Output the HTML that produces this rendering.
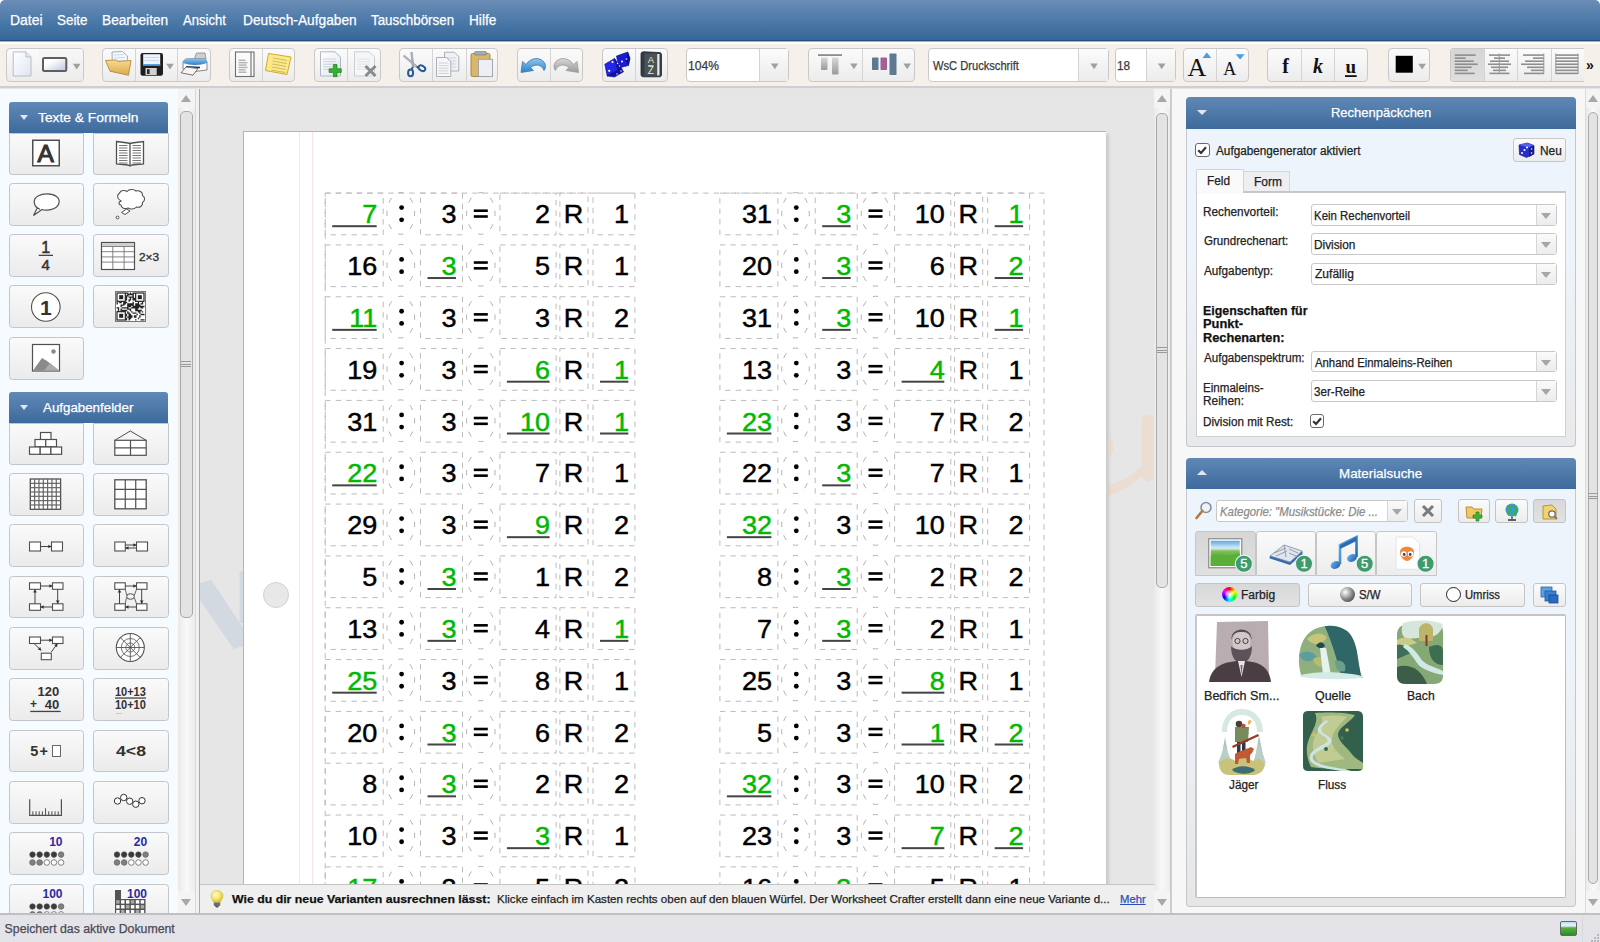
<!DOCTYPE html>
<html><head><meta charset="utf-8">
<style>
*{box-sizing:border-box;margin:0;padding:0}
html,body{width:1600px;height:942px;overflow:hidden;background:#e4e3e8;font-family:"Liberation Sans",sans-serif;font-size:12px;color:#222}
.a{position:absolute}
span.a{-webkit-text-stroke:.25px currentColor}
#menubar{left:0;top:0;width:1600px;height:41px;background:linear-gradient(#6b8db6,#4a78a8 55%,#366798);border-bottom:1px solid #234e7a;border-radius:5px 5px 0 0;box-shadow:inset 0 0 0 0 #000}
#menubar span{position:absolute;top:12px;color:#fff;font-size:13.5px;white-space:nowrap}
#toolbar{left:0;top:41px;width:1600px;height:47px;background:linear-gradient(#a9b0b4 0,#a9b0b4 1px,#fdfdfa 1px,#fdfdfa 2.5px,#f5f0ea 3px);border-bottom:2px solid #cfcfcf}
.grp{position:absolute;top:47px;height:35px;border:1px solid #c9c9c9;border-radius:4px;background:linear-gradient(#fbfbfb,#ececec)}
.grp i{position:absolute;top:0;bottom:0;width:1px;background:#d4d4d4}
.combo{position:absolute;top:47px;height:35px;border:1px solid #c9c9c9;border-radius:4px;background:#fff}
.combo .dd{position:absolute;top:0;right:0;bottom:0;border-left:1px solid #d4d4d4;background:linear-gradient(#fbfbfb,#ececec)}
.tri{position:absolute;width:0;height:0;border-left:5px solid transparent;border-right:5px solid transparent;border-top:7px solid #9a9a9a}
#leftpanel{left:0;top:89px;width:178px;height:825px;background:#f5fbfe}
.lhdr{position:absolute;left:9px;width:159px;height:31px;border-radius:3px 3px 0 0;background:linear-gradient(#6089b6,#3d6a9c);color:#fff;font-size:13px}
.lhdr span{position:absolute;left:33px;top:8px;white-space:nowrap}
.lhdr b{position:absolute;left:11px;top:13px;width:0;height:0;border-left:5px solid transparent;border-right:5px solid transparent;border-top:5px solid #dfe7f0}
.lbtn{position:absolute;width:75px;height:41px;border:1.3px solid #c2c5c9;border-radius:3px;background:linear-gradient(#fafafa,#ebebeb)}
.sb{position:absolute;background:#f3f3f3}
#doc{left:199px;top:89px;width:956px;height:795px;background:#e6e6e6;border-left:1px solid #a9a9a9;overflow:hidden}
#page{position:absolute;left:43px;top:42px;width:863px;height:900px;background:#fff;border-left:1px solid #b5b5b5;border-top:1px solid #b5b5b5;box-shadow:3px 3px 3px rgba(0,0,0,.12)}
#infobar{left:199px;top:884px;width:955px;height:30px;background:#efefef;border-top:1px solid #c4c4c4;border-left:1px solid #a9a9a9}
#rightpanel{left:1171px;top:89px;width:429px;height:825px;background:#f7f7f7;border-left:1px solid #cfcfcf}
.rhdr{position:absolute;left:14px;width:391px;height:31px;border-radius:4px 4px 0 0;background:linear-gradient(#5f88b5,#3d6a9c);color:#fff;font-size:13px;text-align:center}
#status{left:0;top:913px;width:1600px;height:29px;background:#e4e3e8;border-top:2px solid #c0c0c2}
</style></head><body>
<div class="a" style="left:0;top:0;width:8px;height:8px;background:#fff"></div><div class="a" style="left:1592px;top:0;width:8px;height:8px;background:#fff"></div><div id="menubar" class="a"></div>
<span class="a" style="left:10.00px;top:12.30px;font-size:14px;color:#fff;white-space:nowrap;transform:scaleX(0.9968);transform-origin:0 0;">Datei</span><span class="a" style="left:56.74px;top:12.30px;font-size:14px;color:#fff;white-space:nowrap;transform:scaleX(0.9567);transform-origin:0 0;">Seite</span><span class="a" style="left:102.22px;top:12.30px;font-size:14px;color:#fff;white-space:nowrap;transform:scaleX(0.9773);transform-origin:0 0;">Bearbeiten</span><span class="a" style="left:183.30px;top:12.30px;font-size:14px;color:#fff;white-space:nowrap;transform:scaleX(0.9326);transform-origin:0 0;">Ansicht</span><span class="a" style="left:242.62px;top:12.30px;font-size:14px;color:#fff;white-space:nowrap;transform:scaleX(0.9807);transform-origin:0 0;">Deutsch-Aufgaben</span><span class="a" style="left:371.30px;top:12.30px;font-size:14px;color:#fff;white-space:nowrap;transform:scaleX(0.9529);transform-origin:0 0;">Tauschbörsen</span><span class="a" style="left:469.43px;top:12.30px;font-size:14px;color:#fff;white-space:nowrap;transform:scaleX(0.9741);transform-origin:0 0;">Hilfe</span>
<div id="toolbar" class="a"></div>
<div class="grp" style="left:5.5px;top:47.8px;width:78.7px;height:34.10000000000001px"></div><div class="a" style="left:38.8px;top:48.8px;width:44.4px;height:32.1px;background:linear-gradient(#f7f7f7,#ececec);border-radius:0 3px 3px 0"></div><div class="grp" style="left:101.8px;top:47.8px;width:108.89999999999999px;height:34.10000000000001px"><i style="left:32.7px"></i><i style="left:74.60000000000001px"></i></div><div class="grp" style="left:228.5px;top:47.8px;width:66.89999999999998px;height:34.10000000000001px"><i style="left:32.89999999999998px"></i></div><div class="grp" style="left:313.5px;top:47.8px;width:67.19999999999999px;height:34.10000000000001px"><i style="left:32.30000000000001px"></i></div><div class="grp" style="left:398.5px;top:47.8px;width:99.69999999999999px;height:34.10000000000001px"><i style="left:32.0px"></i><i style="left:66.0px"></i></div><div class="grp" style="left:516.5px;top:47.8px;width:66.70000000000005px;height:34.10000000000001px"><i style="left:32.200000000000045px"></i></div><div class="grp" style="left:601.6px;top:47.8px;width:66.60000000000002px;height:34.10000000000001px"><i style="left:32.0px"></i></div><div class="combo" style="left:685.7px;top:47.8px;width:103.5px;height:34.10000000000001px"><div class="dd" style="width:28.800000000000068px"></div></div><span class="a" style="left:687.99px;top:59.20px;font-size:12px;color:#3a3a3a;white-space:nowrap;transform:scaleX(1.0069);transform-origin:0 0;">104%</span><div class="grp" style="left:807.6px;top:47.8px;width:107.19999999999993px;height:34.10000000000001px"><i style="left:53.10000000000002px"></i></div><div class="combo" style="left:928px;top:47.8px;width:181px;height:34.10000000000001px"><div class="dd" style="width:30px"></div></div><span class="a" style="left:932.50px;top:59.20px;font-size:12px;color:#3a3a3a;white-space:nowrap;transform:scaleX(0.9274);transform-origin:0 0;">WsC Druckschrift</span><div class="combo" style="left:1114.6px;top:47.8px;width:61.40000000000009px;height:34.10000000000001px"><div class="dd" style="width:28.59999999999991px"></div></div><span class="a" style="left:1117.22px;top:59.20px;font-size:12px;color:#3a3a3a;white-space:nowrap;transform:scaleX(0.9833);transform-origin:0 0;">18</span><div class="grp" style="left:1182.9px;top:47.8px;width:66.59999999999991px;height:34.10000000000001px"><i style="left:32.59999999999991px"></i></div><div class="grp" style="left:1267.4px;top:47.8px;width:100.59999999999991px;height:34.10000000000001px"><i style="left:33.09999999999991px"></i><i style="left:66.09999999999991px"></i></div><div class="grp" style="left:1387.7px;top:47.8px;width:42.0px;height:34.10000000000001px"></div><div class="grp" style="left:1449.5px;top:47.8px;width:134.0px;height:34.10000000000001px;border-right:none;border-radius:4px 0 0 4px"><div class="a" style="left:0;top:0;width:33.200000000000045px;height:100%;background:linear-gradient(#d6d6d6,#dedede);border-radius:3px 0 0 3px"></div><i style="left:33.200000000000045px"></i><i style="left:66.20000000000005px"></i><i style="left:100.0px"></i></div><svg class="a" style="left:0;top:0" width="1600" height="89"><defs><linearGradient id="pg" x1="0" y1="0" x2="1" y2="1"><stop offset="0" stop-color="#fff"/><stop offset="1" stop-color="#dfe6f2"/></linearGradient><linearGradient id="rg" x1="0" y1="0" x2="1" y2="1"><stop offset=".3" stop-color="#fff"/><stop offset="1" stop-color="#b9c6dc"/></linearGradient><linearGradient id="fg" x1="0" y1="0" x2="0" y2="1"><stop offset="0" stop-color="#f7dc8f"/><stop offset="1" stop-color="#d9a94a"/></linearGradient><linearGradient id="bl" x1="0" y1="0" x2="0" y2="1"><stop offset="0" stop-color="#8cc7f0"/><stop offset="1" stop-color="#2f7fc4"/></linearGradient><linearGradient id="gy" x1="0" y1="0" x2="0" y2="1"><stop offset="0" stop-color="#d8d8d8"/><stop offset="1" stop-color="#9a9a9a"/></linearGradient><linearGradient id="dc" x1="0" y1="0" x2="1" y2="1"><stop offset="0" stop-color="#3a4ee8"/><stop offset="1" stop-color="#10169a"/></linearGradient></defs><path d="M13.2 51.9 H26 L31 56.9 V76 H13.2 Z" fill="url(#pg)" stroke="#b8bcc4" stroke-width="1"/><path d="M26 51.9 V56.9 H31" fill="#e8ecf2" stroke="#b8bcc4" stroke-width="1"/><rect x="43" y="58" width="23.3" height="13" rx="1.5" fill="url(#rg)" stroke="#5e5e5e" stroke-width="2"/><path d="M72.9 63.699999999999996 h7.6 l-3.8 5.8 z" fill="#a0a0a0"/><path d="M112 52 L122.5 51.5 L127.5 56 L127 71 L112.5 71 Z" fill="#f4f7fb" stroke="#9aa6b4" stroke-width=".9"/><path d="M114 55 L124 54.5 M114 58 L125 57.5 M114 61 L125 60.5" stroke="#c0ccd8" stroke-width=".7"/><path d="M105.5 60.5 L116 60 L118 61.5 L131 60.5 L128.5 75.3 L110 71.2 Z" fill="url(#fg)" stroke="#b48a36" stroke-width=".9"/><rect x="140.5" y="53" width="22.5" height="22.7" rx="2.2" fill="#1e1e1e"/><rect x="143.2" y="54.2" width="17" height="11.6" fill="#eef5fc"/><rect x="143.2" y="64.2" width="17" height="1.8" fill="#3a8ad8"/><line x1="144.5" y1="57.5" x2="159" y2="57.5" stroke="#b8d0e8" stroke-width=".7"/><line x1="144.5" y1="60.5" x2="159" y2="60.5" stroke="#b8d0e8" stroke-width=".7"/><rect x="145.5" y="68" width="11.2" height="7" fill="#d0d0d0"/><rect x="147" y="69.2" width="2.6" height="4.8" fill="#2a2a2a"/><path d="M166.2 63.699999999999996 h7.6 l-3.8 5.8 z" fill="#a0a0a0"/><path d="M194.5 58.5 L196.5 53 L205 53 L206 59 Z" fill="#cfcfcf" stroke="#8a8a8a" stroke-width=".8"/><path d="M183 63 C183 60 186 58.5 190 58.5 L203 58.5 C206 58.5 207 61 207 63 L207 70 L195 71.5 L183 69 Z" fill="#fafafa" stroke="#7a7a7a" stroke-width=".9"/><path d="M183 63 C183 60 186 58.5 190 58.5 L203 58.5 C206 58.5 207 61 207 63 C200 65.5 190 65.5 183 63 Z" fill="url(#bl)"/><path d="M186 66 L200 66.8 L200 68.2 L186 67.4 Z" fill="#333"/><path d="M181 72.8 L186 67 L198 68.5 L193 75.2 Z" fill="#f6f6f6" stroke="#666" stroke-width=".9"/><rect x="235.5" y="52" width="18.5" height="24.5" fill="#fafafa" stroke="#6e6e6e" stroke-width="1.1"/><line x1="251" y1="52" x2="251" y2="76.5" stroke="#6e6e6e" stroke-width="1.1"/><rect x="238.5" y="59.5" width="7" height="1.5" fill="#b5b5b5"/><rect x="238.5" y="61.9" width="9" height="1.5" fill="#b5b5b5"/><rect x="238.5" y="64.3" width="8" height="1.5" fill="#b5b5b5"/><rect x="238.5" y="66.7" width="9" height="1.5" fill="#b5b5b5"/><rect x="238.5" y="69.1" width="7" height="1.5" fill="#b5b5b5"/><rect x="238.5" y="71.5" width="8" height="1.5" fill="#b5b5b5"/><path d="M268.5 53.5 L291 57 L287 74.5 L265.5 70.5 Z" fill="#fbe98a" stroke="#d4aa2a" stroke-width="1"/><line x1="273.0" y1="58.0" x2="287.0" y2="60.5" stroke="#b09a40" stroke-width=".6"/><line x1="272.6" y1="61.0" x2="286.6" y2="63.5" stroke="#b09a40" stroke-width=".6"/><line x1="272.2" y1="64.0" x2="286.2" y2="66.5" stroke="#b09a40" stroke-width=".6"/><line x1="271.8" y1="67.0" x2="285.8" y2="69.5" stroke="#b09a40" stroke-width=".6"/><line x1="271.4" y1="70.0" x2="285.4" y2="72.5" stroke="#b09a40" stroke-width=".6"/><path d="M320.5 51.8 H335 L340.5 57 V76 H320.5 Z" fill="url(#pg)" stroke="#aab0ba" stroke-width=".9"/><line x1="323" y1="59.0" x2="336" y2="59.0" stroke="#c5cad2" stroke-width=".8"/><line x1="323" y1="61.6" x2="336" y2="61.6" stroke="#c5cad2" stroke-width=".8"/><line x1="323" y1="64.2" x2="336" y2="64.2" stroke="#c5cad2" stroke-width=".8"/><line x1="323" y1="66.8" x2="336" y2="66.8" stroke="#c5cad2" stroke-width=".8"/><line x1="323" y1="69.4" x2="336" y2="69.4" stroke="#c5cad2" stroke-width=".8"/><path d="M333.4 64.5 h3.6 v4.3 h4.3 v3.6 h-4.3 v4.3 h-3.6 v-4.3 h-4.3 v-3.6 h4.3 z" fill="#33b233" stroke="#1e7a1e" stroke-width=".7"/><path d="M354.5 51.8 H369 L374.5 57 V76 H354.5 Z" fill="#f5f6f8" stroke="#c6cad0" stroke-width=".9"/><line x1="357" y1="59.0" x2="370" y2="59.0" stroke="#dcdfe4" stroke-width=".8"/><line x1="357" y1="61.6" x2="370" y2="61.6" stroke="#dcdfe4" stroke-width=".8"/><line x1="357" y1="64.2" x2="370" y2="64.2" stroke="#dcdfe4" stroke-width=".8"/><line x1="357" y1="66.8" x2="370" y2="66.8" stroke="#dcdfe4" stroke-width=".8"/><line x1="357" y1="69.4" x2="370" y2="69.4" stroke="#dcdfe4" stroke-width=".8"/><path d="M365.5 66 L375.5 76 M375.5 66 L365.5 76" stroke="#8a8a8a" stroke-width="3"/><path d="M410.8 52.5 L412.3 52.3 L414 67.5 L412.3 67.5 Z" fill="#b4bac2" stroke="#80868e" stroke-width=".5"/><path d="M403.3 56.2 L404.5 55.3 L417.5 66.3 L416.2 67.6 Z" fill="#b4bac2" stroke="#80868e" stroke-width=".5"/><path d="M412.8 67 L411.5 69.6 M416.5 66.6 L418.6 67.4" stroke="#2e5b9c" stroke-width="1.8"/><ellipse cx="410.6" cy="72.9" rx="2.5" ry="3.3" fill="none" stroke="#2a5898" stroke-width="2"/><ellipse cx="421.9" cy="68.2" rx="3.6" ry="2.4" fill="none" stroke="#2a5898" stroke-width="2" transform="rotate(30 421.9 68.2)"/><path d="M444.5 52.2 H454.5 L458.8 56.5 V71 H444.5 Z" fill="#eef1f6" stroke="#a4a8ae" stroke-width=".9"/><line x1="447" y1="58.0" x2="456" y2="58.0" stroke="#c8ccd4" stroke-width=".8"/><line x1="447" y1="61.0" x2="456" y2="61.0" stroke="#c8ccd4" stroke-width=".8"/><line x1="447" y1="64.0" x2="456" y2="64.0" stroke="#c8ccd4" stroke-width=".8"/><line x1="447" y1="67.0" x2="456" y2="67.0" stroke="#c8ccd4" stroke-width=".8"/><path d="M436.5 57.5 H446.5 L450.8 61.8 V76.5 H436.5 Z" fill="#f6f7f9" stroke="#a4a8ae" stroke-width=".9"/><line x1="438.5" y1="63.0" x2="448.5" y2="63.0" stroke="#c4c8d0" stroke-width=".8"/><line x1="438.5" y1="65.6" x2="448.5" y2="65.6" stroke="#c4c8d0" stroke-width=".8"/><line x1="438.5" y1="68.2" x2="448.5" y2="68.2" stroke="#c4c8d0" stroke-width=".8"/><line x1="438.5" y1="70.8" x2="448.5" y2="70.8" stroke="#c4c8d0" stroke-width=".8"/><line x1="438.5" y1="73.4" x2="448.5" y2="73.4" stroke="#c4c8d0" stroke-width=".8"/><rect x="471" y="53.5" width="19" height="23" rx="1.5" fill="#d8b768" stroke="#a08238" stroke-width=".9"/><rect x="474.5" y="51.5" width="12" height="3.5" rx="1.2" fill="#a6abb2" stroke="#6e737a" stroke-width=".6"/><rect x="478.5" y="59.3" width="14" height="17.3" fill="#eceff3" stroke="#9aa0a8" stroke-width=".9"/><path d="M521 72.5 L522.5 61.5 L526 64.5 C531 57 541 56.5 545 63.5 C546 66 545.5 69 544 70.5 C542.5 66 537 62.5 530.5 67.5 L533.5 70.5 Z" fill="url(#bl)" stroke="#3a78b8" stroke-width=".8"/><path d="M578.5 72.5 L577 61.5 L573.5 64.5 C568.5 57 558.5 56.5 554.5 63.5 C553.5 66 554 69 555.5 70.5 C557 66 562.5 62.5 569 67.5 L566 70.5 Z" fill="url(#gy)" stroke="#9a9a9a" stroke-width=".8"/><path d="M616.5 56 L627.8 52 L630 58.5 L628.5 65.5 L620.5 67.5 L617.5 61 Z" fill="#1c1cd8" stroke="#0a0a70" stroke-width=".6"/><path d="M627.8 52 L630 58.5 L628.5 65.5 L625.5 60.5 Z" fill="#0e0e9a"/><path d="M604.8 64.2 L614.5 58.5 L618 69.8 L607.2 76 Z" fill="#2424ee" stroke="#0a0a70" stroke-width=".6"/><path d="M614.5 58.5 L620.5 66.5 L623.5 71.8 L614.5 77 L607.2 76 L618 69.8 Z" fill="#1010a8" stroke="#0a0a70" stroke-width=".6"/><circle cx="612.5" cy="62" r="1.1" fill="#fff"/><circle cx="609.2" cy="70.8" r="1.1" fill="#fff"/><circle cx="622" cy="61.5" r="1" fill="#fff"/><circle cx="626.5" cy="59" r="0.8" fill="#fff"/><circle cx="617.5" cy="63.5" r="0.7" fill="#fff"/><circle cx="619.5" cy="66" r="0.7" fill="#fff"/><circle cx="621" cy="71" r="0.7" fill="#fff"/><circle cx="617" cy="74" r="0.7" fill="#fff"/><path d="M641 54 C641 52.5 642 51.8 643.5 51.8 L659.5 52.5 C660.8 52.6 661.5 53.5 661.5 55 L661.5 75 C661.5 76.2 660.5 76.8 659.5 76.8 L643.5 76.8 C642 76.8 641 76 641 74.5 Z" fill="#353b42" stroke="#22262b" stroke-width=".8"/><rect x="644.5" y="53.5" width="12.5" height="22" fill="#48525c"/><rect x="657.2" y="54" width="2.3" height="21.5" fill="#e8e8e8"/><text x="650.8" y="63.2" font-size="9.5" text-anchor="middle" fill="#efe6bc" font-family="Liberation Sans">A</text><text x="650.8" y="74.2" font-size="10" text-anchor="middle" fill="#efe6bc" font-family="Liberation Sans">Z</text><rect x="648" y="65" width="5.5" height="1" fill="#c8c4b0"/><path d="M771.0 63.50000000000001 h7.6 l-3.8 5.8 z" fill="#a0a0a0"/><rect x="818" y="54.2" width="24" height="1.8" fill="#8c8c8c"/><rect x="821" y="57.5" width="6.5" height="12.5" rx="1" fill="url(#gy)"/><rect x="832" y="57.5" width="6.5" height="17" rx="1" fill="url(#gy)"/><path d="M850.1 63.50000000000001 h7.6 l-3.8 5.8 z" fill="#a0a0a0"/><rect x="872" y="57.5" width="6.5" height="12.5" rx=".8" fill="#5d7a92"/><rect x="880.5" y="57.5" width="6.5" height="12.5" rx=".8" fill="#a0609a"/><rect x="889.5" y="53.5" width="7" height="21.5" rx=".8" fill="#5d7a92"/><path d="M903.4000000000001 63.50000000000001 h7.6 l-3.8 5.8 z" fill="#a0a0a0"/><path d="M1090.2 63.50000000000001 h7.6 l-3.8 5.8 z" fill="#a0a0a0"/><path d="M1157.9 63.50000000000001 h7.6 l-3.8 5.8 z" fill="#a0a0a0"/><text x="1197" y="75.8" font-family="Liberation Serif" font-size="26" text-anchor="middle" fill="#111">A</text><path d="M1202.4 58 L1206.85 52.6 L1211.3 58 Z" fill="#4a9de0"/><text x="1229.8" y="75.3" font-family="Liberation Serif" font-size="18" text-anchor="middle" fill="#111">A</text><path d="M1235.7 54.2 H1244.6 L1240.15 59.5 Z" fill="#4a9de0"/><text x="1285.6" y="73" font-family="Liberation Serif" font-size="20" font-weight="bold" text-anchor="middle" fill="#111">f</text><text x="1318" y="73" font-family="Liberation Serif" font-size="20" font-weight="bold" font-style="italic" text-anchor="middle" fill="#111">k</text><text x="1350.8" y="72.5" font-family="Liberation Serif" font-size="19" font-weight="bold" text-anchor="middle" fill="#111">u</text><rect x="1345" y="75.2" width="11.7" height="1.8" fill="#111"/><rect x="1395.7" y="55.8" width="17.1" height="16.9" fill="#000"/><path d="M1418.3 63.800000000000004 h7.6 l-3.8 5.8 z" fill="#a0a0a0"/><rect x="1454.7" y="54.30" width="21" height="1.6" fill="#8e8e8e"/><rect x="1454.7" y="57.35" width="11" height="1.6" fill="#8e8e8e"/><rect x="1454.7" y="60.40" width="19" height="1.6" fill="#8e8e8e"/><rect x="1454.7" y="63.45" width="23" height="1.6" fill="#8e8e8e"/><rect x="1454.7" y="66.50" width="17" height="1.6" fill="#8e8e8e"/><rect x="1454.7" y="69.55" width="13" height="1.6" fill="#8e8e8e"/><rect x="1454.7" y="72.60" width="20" height="1.6" fill="#8e8e8e"/><rect x="1489.0" y="54.30" width="21" height="1.6" fill="#8e8e8e"/><rect x="1494.0" y="57.35" width="11" height="1.6" fill="#8e8e8e"/><rect x="1490.0" y="60.40" width="19" height="1.6" fill="#8e8e8e"/><rect x="1488.0" y="63.45" width="23" height="1.6" fill="#8e8e8e"/><rect x="1491.0" y="66.50" width="17" height="1.6" fill="#8e8e8e"/><rect x="1493.0" y="69.55" width="13" height="1.6" fill="#8e8e8e"/><rect x="1489.5" y="72.60" width="20" height="1.6" fill="#8e8e8e"/><rect x="1498.8" y="53.5" width="1" height="20" fill="#9a9a9a"/><rect x="1523.0" y="54.30" width="21" height="1.6" fill="#8e8e8e"/><rect x="1533.0" y="57.35" width="11" height="1.6" fill="#8e8e8e"/><rect x="1525.0" y="60.40" width="19" height="1.6" fill="#8e8e8e"/><rect x="1521.0" y="63.45" width="23" height="1.6" fill="#8e8e8e"/><rect x="1527.0" y="66.50" width="17" height="1.6" fill="#8e8e8e"/><rect x="1531.0" y="69.55" width="13" height="1.6" fill="#8e8e8e"/><rect x="1524.0" y="72.60" width="20" height="1.6" fill="#8e8e8e"/><rect x="1543.3" y="53.5" width="1" height="20" fill="#9a9a9a"/><rect x="1555.5" y="54.30" width="23" height="1.6" fill="#8e8e8e"/><rect x="1555.5" y="57.35" width="23" height="1.6" fill="#8e8e8e"/><rect x="1555.5" y="60.40" width="23" height="1.6" fill="#8e8e8e"/><rect x="1555.5" y="63.45" width="23" height="1.6" fill="#8e8e8e"/><rect x="1555.5" y="66.50" width="23" height="1.6" fill="#8e8e8e"/><rect x="1555.5" y="69.55" width="23" height="1.6" fill="#8e8e8e"/><rect x="1555.5" y="72.60" width="23" height="1.6" fill="#8e8e8e"/><rect x="1555.3" y="53.5" width="1" height="20" fill="#9a9a9a"/><rect x="1577.5" y="53.5" width="1" height="20" fill="#9a9a9a"/><text x="1590" y="70" font-size="14" font-weight="bold" text-anchor="middle" fill="#111">»</text></svg>
<div id="leftpanel" class="a"></div>
<div class="a" style="left:0;top:89px;width:178px;height:825px;overflow:hidden"><div class="a" style="left:0;top:-89px;width:178px;height:914px"><div class="lhdr" style="top:102px"><b style="left:10.5px;top:13px;border-left-width:4.5px;border-right-width:4.5px"></b></div><span class="a" style="left:38.00px;top:110.20px;font-size:13.4px;color:#fff;white-space:nowrap;transform:scaleX(1.0309);transform-origin:0 0;">Texte &amp; Formeln</span><div class="lbtn" style="left:8.5px;top:133px;width:75.5px;height:41.8px;border-radius:0 0 3px 3px"></div><div class="lbtn" style="left:93px;top:133px;width:75.5px;height:41.8px;border-radius:0 0 3px 3px"></div><div class="lbtn" style="left:8.5px;top:183.2px;width:75.5px;height:42.6px;border-radius:3.5px"></div><div class="lbtn" style="left:93px;top:183.2px;width:75.5px;height:42.6px;border-radius:3.5px"></div><div class="lbtn" style="left:8.5px;top:234.2px;width:75.5px;height:42.6px;border-radius:3.5px"></div><div class="lbtn" style="left:93px;top:234.2px;width:75.5px;height:42.6px;border-radius:3.5px"></div><div class="lbtn" style="left:8.5px;top:285.4px;width:75.5px;height:42.6px;border-radius:3.5px"></div><div class="lbtn" style="left:93px;top:285.4px;width:75.5px;height:42.6px;border-radius:3.5px"></div><div class="lbtn" style="left:8.5px;top:337.2px;width:75.5px;height:42.6px;border-radius:3.5px"></div><div class="lhdr" style="top:392px"><b style="left:10.5px;top:13px;border-left-width:4.5px;border-right-width:4.5px"></b></div><span class="a" style="left:43.00px;top:400.20px;font-size:13.4px;color:#fff;white-space:nowrap;transform:scaleX(0.9945);transform-origin:0 0;">Aufgabenfelder</span><div class="lbtn" style="left:8.5px;top:423px;width:75.5px;height:41.8px;border-radius:0 0 3px 3px"></div><div class="lbtn" style="left:93px;top:423px;width:75.5px;height:41.8px;border-radius:0 0 3px 3px"></div><div class="lbtn" style="left:8.5px;top:473.2px;width:75.5px;height:42.6px;border-radius:3.5px"></div><div class="lbtn" style="left:93px;top:473.2px;width:75.5px;height:42.6px;border-radius:3.5px"></div><div class="lbtn" style="left:8.5px;top:524.2px;width:75.5px;height:42.6px;border-radius:3.5px"></div><div class="lbtn" style="left:93px;top:524.2px;width:75.5px;height:42.6px;border-radius:3.5px"></div><div class="lbtn" style="left:8.5px;top:575.8000000000001px;width:75.5px;height:42.6px;border-radius:3.5px"></div><div class="lbtn" style="left:93px;top:575.8000000000001px;width:75.5px;height:42.6px;border-radius:3.5px"></div><div class="lbtn" style="left:8.5px;top:627.2px;width:75.5px;height:42.6px;border-radius:3.5px"></div><div class="lbtn" style="left:93px;top:627.2px;width:75.5px;height:42.6px;border-radius:3.5px"></div><div class="lbtn" style="left:8.5px;top:678.2px;width:75.5px;height:42.6px;border-radius:3.5px"></div><div class="lbtn" style="left:93px;top:678.2px;width:75.5px;height:42.6px;border-radius:3.5px"></div><div class="lbtn" style="left:8.5px;top:729.8000000000001px;width:75.5px;height:42.6px;border-radius:3.5px"></div><div class="lbtn" style="left:93px;top:729.8000000000001px;width:75.5px;height:42.6px;border-radius:3.5px"></div><div class="lbtn" style="left:8.5px;top:781.2px;width:75.5px;height:42.6px;border-radius:3.5px"></div><div class="lbtn" style="left:93px;top:781.2px;width:75.5px;height:42.6px;border-radius:3.5px"></div><div class="lbtn" style="left:8.5px;top:832.2px;width:75.5px;height:42.6px;border-radius:3.5px"></div><div class="lbtn" style="left:93px;top:832.2px;width:75.5px;height:42.6px;border-radius:3.5px"></div><div class="lbtn" style="left:8.5px;top:883.6px;width:75.5px;height:42.6px;border-radius:3.5px"></div><div class="lbtn" style="left:93px;top:883.6px;width:75.5px;height:42.6px;border-radius:3.5px"></div><svg class="a" style="left:0;top:0" width="178" height="914" font-family="Liberation Sans"><rect x="32.75" y="140.25" width="26.5" height="25.5" fill="#fff" stroke="#505050" stroke-width="1.5"/><text x="45.6" y="161.6" font-size="24.5" text-anchor="middle" fill="#333" stroke="#333" stroke-width="1.1">A</text><path d="M116.5 141.5 L128 143 L130 143.5 L132 143 L143.5 141.5 L143.5 164 L132 165 L130 166 L128 165 L116.5 164 Z" fill="#fff" stroke="#505050" stroke-width="1.3"/><line x1="130" y1="143.5" x2="130" y2="166" stroke="#505050" stroke-width="1.3"/><line x1="119" y1="145.5" x2="127.5" y2="145.5" stroke="#777" stroke-width="1"/><line x1="132.5" y1="145.5" x2="141" y2="145.5" stroke="#777" stroke-width="1"/><line x1="119" y1="148.0" x2="127.5" y2="148.0" stroke="#777" stroke-width="1"/><line x1="132.5" y1="148.0" x2="141" y2="148.0" stroke="#777" stroke-width="1"/><line x1="119" y1="150.5" x2="127.5" y2="150.5" stroke="#777" stroke-width="1"/><line x1="132.5" y1="150.5" x2="141" y2="150.5" stroke="#777" stroke-width="1"/><line x1="119" y1="153.0" x2="127.5" y2="153.0" stroke="#777" stroke-width="1"/><line x1="132.5" y1="153.0" x2="141" y2="153.0" stroke="#777" stroke-width="1"/><line x1="119" y1="155.5" x2="127.5" y2="155.5" stroke="#777" stroke-width="1"/><line x1="132.5" y1="155.5" x2="141" y2="155.5" stroke="#777" stroke-width="1"/><line x1="119" y1="158.0" x2="127.5" y2="158.0" stroke="#777" stroke-width="1"/><line x1="132.5" y1="158.0" x2="141" y2="158.0" stroke="#777" stroke-width="1"/><line x1="119" y1="160.5" x2="127.5" y2="160.5" stroke="#777" stroke-width="1"/><line x1="132.5" y1="160.5" x2="141" y2="160.5" stroke="#777" stroke-width="1"/><line x1="119" y1="163.0" x2="127.5" y2="163.0" stroke="#777" stroke-width="1"/><line x1="132.5" y1="163.0" x2="141" y2="163.0" stroke="#777" stroke-width="1"/><path d="M40 209.2 C33 207 32.5 199 38 196 C43 193 52 193 56.5 196.5 C61 200 59.5 206 54 208.5 C50 210.5 44 210.5 42 209.5 L33.5 215.5 L37.5 207.5" fill="#fff" stroke="#505050" stroke-width="1.2"/><path d="M121 201 C117 199 116.5 195 119.5 193 C121 190 125 190 127 191.5 C129 189 134 189 136 191 C139 190 143 192 142.5 195.5 C145.5 197 145 201 142.5 202.5 C143 206 139.5 208 136.5 207 C134.5 209.5 130 209.5 128 208 C125 209.5 121 208 121 205 C118 204.5 118.5 202 121 201 Z" fill="#fff" stroke="#505050" stroke-width="1.1"/><path d="M121.5 212.5 L126.5 209 L130 211 L125 214.5 Z" fill="#fff" stroke="#505050" stroke-width="1"/><circle cx="117.5" cy="217.5" r="1.4" fill="#fff" stroke="#505050" stroke-width="1"/><text x="45.6" y="253" font-size="16" text-anchor="middle" fill="#333" stroke="#333" stroke-width=".5">1</text><rect x="38.7" y="254.7" width="14.3" height="1.3" fill="#444"/><text x="45.6" y="270.3" font-size="15" text-anchor="middle" fill="#333" stroke="#333" stroke-width=".5">4</text><rect x="101.5" y="242.5" width="33" height="27" fill="#fff" stroke="#505050" stroke-width="1.2"/><rect x="102" y="243" width="32" height="3" fill="#cfcfcf"/><line x1="102" y1="246.5" x2="134" y2="246.5" stroke="#777" stroke-width="0.9"/><line x1="102" y1="251.7" x2="134" y2="251.7" stroke="#777" stroke-width="0.9"/><line x1="102" y1="256.9" x2="134" y2="256.9" stroke="#777" stroke-width="0.9"/><line x1="102" y1="262.1" x2="134" y2="262.1" stroke="#777" stroke-width="0.9"/><line x1="112.8" y1="246.5" x2="112.8" y2="269" stroke="#777" stroke-width="0.9"/><line x1="124.1" y1="246.5" x2="124.1" y2="269" stroke="#777" stroke-width="0.9"/><text x="139" y="261.3" font-size="11" fill="#333" stroke="#333" stroke-width=".35" textLength="20" lengthAdjust="spacingAndGlyphs">2×3</text><circle cx="45.8" cy="307" r="14.3" fill="#fff" stroke="#505050" stroke-width="1.1"/><text x="45.8" y="315" font-size="21" font-weight="bold" text-anchor="middle" fill="#333">1</text><rect x="115.5" y="291.5" width="30" height="30" fill="#fff" stroke="#777" stroke-width="1"/><path d="M125.83 292.50h1.33v1.33h-1.33zM127.17 292.50h1.33v1.33h-1.33zM129.83 292.50h1.33v1.33h-1.33zM132.50 292.50h1.33v1.33h-1.33zM133.83 292.50h1.33v1.33h-1.33zM127.17 293.83h1.33v1.33h-1.33zM128.50 293.83h1.33v1.33h-1.33zM129.83 293.83h1.33v1.33h-1.33zM131.17 293.83h1.33v1.33h-1.33zM132.50 293.83h1.33v1.33h-1.33zM125.83 295.17h1.33v1.33h-1.33zM127.17 295.17h1.33v1.33h-1.33zM132.50 295.17h1.33v1.33h-1.33zM125.83 296.50h1.33v1.33h-1.33zM128.50 296.50h1.33v1.33h-1.33zM129.83 296.50h1.33v1.33h-1.33zM131.17 296.50h1.33v1.33h-1.33zM132.50 296.50h1.33v1.33h-1.33zM125.83 297.83h1.33v1.33h-1.33zM129.83 297.83h1.33v1.33h-1.33zM132.50 297.83h1.33v1.33h-1.33zM133.83 297.83h1.33v1.33h-1.33zM125.83 299.17h1.33v1.33h-1.33zM128.50 299.17h1.33v1.33h-1.33zM129.83 299.17h1.33v1.33h-1.33zM132.50 299.17h1.33v1.33h-1.33zM133.83 299.17h1.33v1.33h-1.33zM128.50 300.50h1.33v1.33h-1.33zM116.50 301.83h1.33v1.33h-1.33zM119.17 301.83h1.33v1.33h-1.33zM120.50 301.83h1.33v1.33h-1.33zM123.17 301.83h1.33v1.33h-1.33zM124.50 301.83h1.33v1.33h-1.33zM125.83 301.83h1.33v1.33h-1.33zM132.50 301.83h1.33v1.33h-1.33zM137.83 301.83h1.33v1.33h-1.33zM141.83 301.83h1.33v1.33h-1.33zM116.50 303.17h1.33v1.33h-1.33zM123.17 303.17h1.33v1.33h-1.33zM124.50 303.17h1.33v1.33h-1.33zM127.17 303.17h1.33v1.33h-1.33zM128.50 303.17h1.33v1.33h-1.33zM129.83 303.17h1.33v1.33h-1.33zM131.17 303.17h1.33v1.33h-1.33zM132.50 303.17h1.33v1.33h-1.33zM135.17 303.17h1.33v1.33h-1.33zM136.50 303.17h1.33v1.33h-1.33zM137.83 303.17h1.33v1.33h-1.33zM140.50 303.17h1.33v1.33h-1.33zM141.83 303.17h1.33v1.33h-1.33zM120.50 304.50h1.33v1.33h-1.33zM121.83 304.50h1.33v1.33h-1.33zM123.17 304.50h1.33v1.33h-1.33zM127.17 304.50h1.33v1.33h-1.33zM128.50 304.50h1.33v1.33h-1.33zM129.83 304.50h1.33v1.33h-1.33zM131.17 304.50h1.33v1.33h-1.33zM132.50 304.50h1.33v1.33h-1.33zM135.17 304.50h1.33v1.33h-1.33zM136.50 304.50h1.33v1.33h-1.33zM137.83 304.50h1.33v1.33h-1.33zM139.17 304.50h1.33v1.33h-1.33zM120.50 305.83h1.33v1.33h-1.33zM127.17 305.83h1.33v1.33h-1.33zM128.50 305.83h1.33v1.33h-1.33zM129.83 305.83h1.33v1.33h-1.33zM132.50 305.83h1.33v1.33h-1.33zM133.83 305.83h1.33v1.33h-1.33zM135.17 305.83h1.33v1.33h-1.33zM136.50 305.83h1.33v1.33h-1.33zM137.83 305.83h1.33v1.33h-1.33zM139.17 305.83h1.33v1.33h-1.33zM140.50 305.83h1.33v1.33h-1.33zM141.83 305.83h1.33v1.33h-1.33zM143.17 305.83h1.33v1.33h-1.33zM116.50 307.17h1.33v1.33h-1.33zM117.83 307.17h1.33v1.33h-1.33zM121.83 307.17h1.33v1.33h-1.33zM123.17 307.17h1.33v1.33h-1.33zM124.50 307.17h1.33v1.33h-1.33zM125.83 307.17h1.33v1.33h-1.33zM127.17 307.17h1.33v1.33h-1.33zM131.17 307.17h1.33v1.33h-1.33zM132.50 307.17h1.33v1.33h-1.33zM133.83 307.17h1.33v1.33h-1.33zM135.17 307.17h1.33v1.33h-1.33zM136.50 307.17h1.33v1.33h-1.33zM137.83 307.17h1.33v1.33h-1.33zM140.50 307.17h1.33v1.33h-1.33zM141.83 307.17h1.33v1.33h-1.33zM117.83 308.50h1.33v1.33h-1.33zM120.50 308.50h1.33v1.33h-1.33zM127.17 308.50h1.33v1.33h-1.33zM128.50 308.50h1.33v1.33h-1.33zM129.83 308.50h1.33v1.33h-1.33zM135.17 308.50h1.33v1.33h-1.33zM136.50 308.50h1.33v1.33h-1.33zM117.83 309.83h1.33v1.33h-1.33zM120.50 309.83h1.33v1.33h-1.33zM121.83 309.83h1.33v1.33h-1.33zM123.17 309.83h1.33v1.33h-1.33zM124.50 309.83h1.33v1.33h-1.33zM125.83 309.83h1.33v1.33h-1.33zM129.83 309.83h1.33v1.33h-1.33zM135.17 309.83h1.33v1.33h-1.33zM136.50 309.83h1.33v1.33h-1.33zM137.83 309.83h1.33v1.33h-1.33zM139.17 309.83h1.33v1.33h-1.33zM140.50 309.83h1.33v1.33h-1.33zM127.17 311.17h1.33v1.33h-1.33zM131.17 311.17h1.33v1.33h-1.33zM137.83 311.17h1.33v1.33h-1.33zM139.17 311.17h1.33v1.33h-1.33zM141.83 311.17h1.33v1.33h-1.33zM127.17 312.50h1.33v1.33h-1.33zM128.50 312.50h1.33v1.33h-1.33zM132.50 312.50h1.33v1.33h-1.33zM133.83 312.50h1.33v1.33h-1.33zM135.17 312.50h1.33v1.33h-1.33zM139.17 312.50h1.33v1.33h-1.33zM125.83 313.83h1.33v1.33h-1.33zM128.50 313.83h1.33v1.33h-1.33zM129.83 313.83h1.33v1.33h-1.33zM136.50 313.83h1.33v1.33h-1.33zM140.50 313.83h1.33v1.33h-1.33zM141.83 313.83h1.33v1.33h-1.33zM143.17 313.83h1.33v1.33h-1.33zM125.83 315.17h1.33v1.33h-1.33zM128.50 315.17h1.33v1.33h-1.33zM129.83 315.17h1.33v1.33h-1.33zM131.17 315.17h1.33v1.33h-1.33zM133.83 315.17h1.33v1.33h-1.33zM135.17 315.17h1.33v1.33h-1.33zM139.17 315.17h1.33v1.33h-1.33zM127.17 316.50h1.33v1.33h-1.33zM128.50 316.50h1.33v1.33h-1.33zM129.83 316.50h1.33v1.33h-1.33zM131.17 316.50h1.33v1.33h-1.33zM133.83 316.50h1.33v1.33h-1.33zM135.17 316.50h1.33v1.33h-1.33zM139.17 316.50h1.33v1.33h-1.33zM125.83 317.83h1.33v1.33h-1.33zM128.50 317.83h1.33v1.33h-1.33zM129.83 317.83h1.33v1.33h-1.33zM137.83 317.83h1.33v1.33h-1.33zM125.83 319.17h1.33v1.33h-1.33zM128.50 319.17h1.33v1.33h-1.33zM135.17 319.17h1.33v1.33h-1.33zM140.50 319.17h1.33v1.33h-1.33zM141.83 319.17h1.33v1.33h-1.33zM143.17 319.17h1.33v1.33h-1.33z" fill="#222"/><rect x="117.00" y="293.00" width="8.33" height="8.33" fill="#fff" stroke="#222" stroke-width="1.2"/><rect x="119.17" y="295.17" width="4.00" height="4.00" fill="#222"/><rect x="135.67" y="293.00" width="8.33" height="8.33" fill="#fff" stroke="#222" stroke-width="1.2"/><rect x="137.83" y="295.17" width="4.00" height="4.00" fill="#222"/><rect x="117.00" y="311.67" width="8.33" height="8.33" fill="#fff" stroke="#222" stroke-width="1.2"/><rect x="119.17" y="313.83" width="4.00" height="4.00" fill="#222"/><rect x="32.5" y="344.5" width="27" height="26.5" fill="#fff" stroke="#505050" stroke-width="1.2"/><circle cx="53.5" cy="351.5" r="2.2" fill="#888"/><path d="M33 370.5 L42 358 L47 361 L49.5 363 L59 370.5 Z" fill="#8a8a8a"/><path d="M44 370.5 L50 363 L59 370.5 Z" fill="#aaa"/><rect x="40.5" y="432.5" width="10.5" height="7.3" fill="#fff" stroke="#505050" stroke-width="1.2"/><rect x="35" y="439.5" width="10.75" height="7.3" fill="#fff" stroke="#505050" stroke-width="1.2"/><rect x="45.75" y="439.5" width="10.75" height="7.3" fill="#fff" stroke="#505050" stroke-width="1.2"/><rect x="29.5" y="447" width="10.7" height="7.3" fill="#fff" stroke="#505050" stroke-width="1.2"/><rect x="40.2" y="447" width="10.7" height="7.3" fill="#fff" stroke="#505050" stroke-width="1.2"/><rect x="50.9" y="447" width="10.7" height="7.3" fill="#fff" stroke="#505050" stroke-width="1.2"/><path d="M114.8 440.3 L130.3 431 L146.2 440.3" fill="none" stroke="#505050" stroke-width="1"/><rect x="114.8" y="440.3" width="31.4" height="15" fill="#fff" stroke="#505050" stroke-width="1.2"/><line x1="130.5" y1="440.3" x2="130.5" y2="455.3" stroke="#505050" stroke-width="1.2"/><line x1="114.8" y1="447.8" x2="146.2" y2="447.8" stroke="#505050" stroke-width="1.2"/><rect x="30.3" y="479" width="30.3" height="30.3" fill="#fff" stroke="#505050" stroke-width="1.3"/><line x1="34.63" y1="479" x2="34.63" y2="509.3" stroke="#666" stroke-width="1.2"/><line x1="30.3" y1="483.33" x2="60.6" y2="483.33" stroke="#666" stroke-width="1.2"/><line x1="38.96" y1="479" x2="38.96" y2="509.3" stroke="#666" stroke-width="1.2"/><line x1="30.3" y1="487.66" x2="60.6" y2="487.66" stroke="#666" stroke-width="1.2"/><line x1="43.29" y1="479" x2="43.29" y2="509.3" stroke="#666" stroke-width="1.2"/><line x1="30.3" y1="491.99" x2="60.6" y2="491.99" stroke="#666" stroke-width="1.2"/><line x1="47.61" y1="479" x2="47.61" y2="509.3" stroke="#666" stroke-width="1.2"/><line x1="30.3" y1="496.31" x2="60.6" y2="496.31" stroke="#666" stroke-width="1.2"/><line x1="51.94" y1="479" x2="51.94" y2="509.3" stroke="#666" stroke-width="1.2"/><line x1="30.3" y1="500.64" x2="60.6" y2="500.64" stroke="#666" stroke-width="1.2"/><line x1="56.27" y1="479" x2="56.27" y2="509.3" stroke="#666" stroke-width="1.2"/><line x1="30.3" y1="504.97" x2="60.6" y2="504.97" stroke="#666" stroke-width="1.2"/><rect x="114.8" y="479.8" width="31.4" height="29" fill="#fff" stroke="#505050" stroke-width="1.3"/><line x1="125.27" y1="479.8" x2="125.27" y2="508.8" stroke="#505050" stroke-width="1.2"/><line x1="114.8" y1="489.47" x2="146.2" y2="489.47" stroke="#505050" stroke-width="1.2"/><line x1="135.73" y1="479.8" x2="135.73" y2="508.8" stroke="#505050" stroke-width="1.2"/><line x1="114.8" y1="499.13" x2="146.2" y2="499.13" stroke="#505050" stroke-width="1.2"/><rect x="29.5" y="542" width="11" height="9" fill="#fff" stroke="#505050" stroke-width="1.1"/><rect x="51.5" y="542" width="11" height="9" fill="#fff" stroke="#505050" stroke-width="1.1"/><line x1="40.5" y1="546.5" x2="51.5" y2="546.5" stroke="#444" stroke-width="1"/><path d="M51.50 546.50 L48.30 548.30 L48.30 544.70 Z" fill="#333"/><rect x="114.8" y="542" width="10.5" height="9" fill="#fff" stroke="#505050" stroke-width="1.1"/><rect x="136.5" y="542" width="11" height="9" fill="#fff" stroke="#505050" stroke-width="1.1"/><line x1="125.3" y1="545" x2="136.5" y2="545" stroke="#444" stroke-width="1"/><path d="M136.50 545.00 L133.30 546.80 L133.30 543.20 Z" fill="#333"/><line x1="136.5" y1="548" x2="125.3" y2="548" stroke="#444" stroke-width="1"/><path d="M125.30 548.00 L128.50 546.20 L128.50 549.80 Z" fill="#333"/><rect x="29.5" y="582.8" width="11" height="6.5" fill="#fff" stroke="#505050" stroke-width="1.1"/><rect x="52.5" y="582.8" width="10.5" height="6.5" fill="#fff" stroke="#505050" stroke-width="1.1"/><rect x="29.5" y="603.8" width="11" height="6.5" fill="#fff" stroke="#505050" stroke-width="1.1"/><rect x="52.5" y="603.8" width="10.5" height="6.5" fill="#fff" stroke="#505050" stroke-width="1.1"/><line x1="40.5" y1="586" x2="52.5" y2="586" stroke="#444" stroke-width="1"/><path d="M52.50 586.00 L49.30 587.80 L49.30 584.20 Z" fill="#333"/><line x1="57.7" y1="589.3" x2="57.7" y2="603.8" stroke="#444" stroke-width="1"/><path d="M57.70 603.80 L55.90 600.60 L59.50 600.60 Z" fill="#333"/><line x1="52.5" y1="607" x2="40.5" y2="607" stroke="#444" stroke-width="1"/><path d="M40.50 607.00 L43.70 605.20 L43.70 608.80 Z" fill="#333"/><line x1="35" y1="603.8" x2="35" y2="589.3" stroke="#444" stroke-width="1"/><path d="M35.00 589.30 L36.80 592.50 L33.20 592.50 Z" fill="#333"/><rect x="114.8" y="582.8" width="10.5" height="6.5" fill="#fff" stroke="#505050" stroke-width="1.1"/><rect x="136.5" y="582.8" width="10.5" height="6.5" fill="#fff" stroke="#505050" stroke-width="1.1"/><rect x="114.8" y="603.8" width="10.5" height="6.5" fill="#fff" stroke="#505050" stroke-width="1.1"/><rect x="136.5" y="603.8" width="10.5" height="6.5" fill="#fff" stroke="#505050" stroke-width="1.1"/><line x1="125.3" y1="586" x2="136.5" y2="586" stroke="#444" stroke-width="1"/><path d="M136.50 586.00 L133.30 587.80 L133.30 584.20 Z" fill="#333"/><line x1="141.7" y1="589.3" x2="141.7" y2="603.8" stroke="#444" stroke-width="1"/><path d="M141.70 603.80 L139.90 600.60 L143.50 600.60 Z" fill="#333"/><line x1="136.5" y1="607" x2="125.3" y2="607" stroke="#444" stroke-width="1"/><path d="M125.30 607.00 L128.50 605.20 L128.50 608.80 Z" fill="#333"/><line x1="119.5" y1="603.8" x2="119.5" y2="589.3" stroke="#444" stroke-width="1"/><path d="M119.50 589.30 L121.30 592.50 L117.70 592.50 Z" fill="#333"/><ellipse cx="130.5" cy="596.5" rx="3.8" ry="2.8" fill="none" stroke="#505050" stroke-width="1"/><path d="M125.3 589.3 L126.8 595.5 M136.5 589.3 L134.3 595.5 M126.5 597.5 L125.3 603.8 M134.3 597.5 L136.5 603.8" stroke="#555" stroke-width=".9"/><rect x="29.5" y="637" width="11" height="6.5" fill="#fff" stroke="#505050" stroke-width="1.1"/><rect x="52.5" y="637" width="10.5" height="6.5" fill="#fff" stroke="#505050" stroke-width="1.1"/><rect x="41.3" y="653.2" width="10" height="6.5" fill="#fff" stroke="#505050" stroke-width="1.1"/><line x1="40.5" y1="640.2" x2="52.5" y2="640.2" stroke="#444" stroke-width="1"/><path d="M52.50 640.20 L49.30 642.00 L49.30 638.40 Z" fill="#333"/><line x1="34" y1="643.5" x2="41.3" y2="650.5" stroke="#444" stroke-width="1"/><path d="M41.30 650.50 L37.74 649.58 L40.24 646.99 Z" fill="#333"/><line x1="51.3" y1="652" x2="57.5" y2="643.5" stroke="#444" stroke-width="1"/><path d="M57.50 643.50 L57.07 647.15 L54.16 645.02 Z" fill="#333"/><circle cx="130.3" cy="647.5" r="14" fill="#fff" stroke="#505050" stroke-width="1.1"/><circle cx="130.3" cy="647.5" r="9" fill="none" stroke="#666" stroke-width=".9"/><circle cx="130.3" cy="647.5" r="4.5" fill="none" stroke="#666" stroke-width=".9"/><path d="M116.3 647.5 H144.3 M130.3 633.5 V661.5 M120.4 637.6 L140.2 657.4 M140.2 637.6 L120.4 657.4" stroke="#555" stroke-width=".9"/><text x="59.2" y="695.8" font-size="13" font-weight="bold" text-anchor="end" fill="#333">120</text><text x="59.2" y="708.9" font-size="13" font-weight="bold" text-anchor="end" fill="#333">40</text><text x="30" y="707.5" font-size="12" font-weight="bold" fill="#333">+</text><rect x="30.2" y="710.8" width="30.5" height="1.3" fill="#444"/><text x="130.4" y="695.8" font-size="12.5" font-weight="bold" text-anchor="middle" fill="#333" textLength="31" lengthAdjust="spacingAndGlyphs">10+13</text><rect x="115" y="697.4" width="31" height="1.3" fill="#444"/><text x="130.4" y="708.9" font-size="12.5" font-weight="bold" text-anchor="middle" fill="#333" textLength="31" lengthAdjust="spacingAndGlyphs">10+10</text><text x="116" y="714" font-size="7" fill="#666">...</text><text x="30.2" y="756.3" font-size="14.5" font-weight="bold" fill="#333">5</text><text x="39.5" y="756.3" font-size="14.5" font-weight="bold" fill="#333">+</text><rect x="52.5" y="745.5" width="8" height="11" fill="#fff" stroke="#666" stroke-width="1"/><text x="131" y="756.3" font-size="14.5" font-weight="bold" text-anchor="middle" fill="#333" textLength="30" lengthAdjust="spacingAndGlyphs">4&lt;8</text><path d="M29.7 799.2 V815.3 H61.4 V799.2" fill="none" stroke="#505050" stroke-width="1.2"/><line x1="32.87" y1="815.3" x2="32.87" y2="811.3" stroke="#505050" stroke-width="1"/><line x1="36.04" y1="815.3" x2="36.04" y2="811.3" stroke="#505050" stroke-width="1"/><line x1="39.21" y1="815.3" x2="39.21" y2="811.3" stroke="#505050" stroke-width="1"/><line x1="42.38" y1="815.3" x2="42.38" y2="811.3" stroke="#505050" stroke-width="1"/><line x1="45.55" y1="815.3" x2="45.55" y2="808.3" stroke="#505050" stroke-width="1"/><line x1="48.72" y1="815.3" x2="48.72" y2="811.3" stroke="#505050" stroke-width="1"/><line x1="51.89" y1="815.3" x2="51.89" y2="811.3" stroke="#505050" stroke-width="1"/><line x1="55.06" y1="815.3" x2="55.06" y2="811.3" stroke="#505050" stroke-width="1"/><line x1="58.23" y1="815.3" x2="58.23" y2="811.3" stroke="#505050" stroke-width="1"/><circle cx="117.5" cy="801" r="3.2" fill="#fff" stroke="#333" stroke-width="1"/><circle cx="123.7" cy="797.5" r="3.2" fill="#fff" stroke="#333" stroke-width="1"/><circle cx="129.7" cy="801.2" r="3.2" fill="#fff" stroke="#333" stroke-width="1"/><circle cx="135.8" cy="804.2" r="3.2" fill="#fff" stroke="#333" stroke-width="1"/><circle cx="142" cy="800.7" r="3.2" fill="#fff" stroke="#333" stroke-width="1"/><text x="62.5" y="846.4" font-size="12" font-weight="bold" text-anchor="end" fill="#2a2aa0">10</text><circle cx="32.50" cy="854.6" r="2.8" fill="#3a3a3a" stroke="#555" stroke-width=".6"/><circle cx="32.50" cy="862.50" r="2.8" fill="#808080" stroke="#666" stroke-width=".8"/><circle cx="39.65" cy="854.6" r="2.8" fill="#3a3a3a" stroke="#555" stroke-width=".6"/><circle cx="39.65" cy="862.50" r="2.8" fill="#808080" stroke="#666" stroke-width=".8"/><circle cx="46.80" cy="854.6" r="2.8" fill="#3a3a3a" stroke="#555" stroke-width=".6"/><circle cx="46.80" cy="862.50" r="2.8" fill="#fff" stroke="#666" stroke-width=".8"/><circle cx="53.95" cy="854.6" r="2.8" fill="#3a3a3a" stroke="#555" stroke-width=".6"/><circle cx="53.95" cy="862.50" r="2.8" fill="#fff" stroke="#666" stroke-width=".8"/><circle cx="61.10" cy="854.6" r="2.8" fill="#808080" stroke="#555" stroke-width=".6"/><circle cx="61.10" cy="862.50" r="2.8" fill="#fff" stroke="#666" stroke-width=".8"/><text x="147.1" y="846.4" font-size="12" font-weight="bold" text-anchor="end" fill="#2a2aa0">20</text><circle cx="117.00" cy="854.6" r="2.8" fill="#3a3a3a" stroke="#555" stroke-width=".6"/><circle cx="117.00" cy="862.50" r="2.8" fill="#808080" stroke="#666" stroke-width=".8"/><circle cx="124.15" cy="854.6" r="2.8" fill="#3a3a3a" stroke="#555" stroke-width=".6"/><circle cx="124.15" cy="862.50" r="2.8" fill="#808080" stroke="#666" stroke-width=".8"/><circle cx="131.30" cy="854.6" r="2.8" fill="#3a3a3a" stroke="#555" stroke-width=".6"/><circle cx="131.30" cy="862.50" r="2.8" fill="#fff" stroke="#666" stroke-width=".8"/><circle cx="138.45" cy="854.6" r="2.8" fill="#3a3a3a" stroke="#555" stroke-width=".6"/><circle cx="138.45" cy="862.50" r="2.8" fill="#fff" stroke="#666" stroke-width=".8"/><circle cx="145.60" cy="854.6" r="2.8" fill="#808080" stroke="#555" stroke-width=".6"/><circle cx="145.60" cy="862.50" r="2.8" fill="#fff" stroke="#666" stroke-width=".8"/><text x="62.5" y="898" font-size="12" font-weight="bold" text-anchor="end" fill="#2a2aa0">100</text><circle cx="32.50" cy="906.5" r="2.8" fill="#3a3a3a" stroke="#555" stroke-width=".6"/><circle cx="32.50" cy="914.40" r="2.8" fill="#808080" stroke="#666" stroke-width=".8"/><circle cx="39.65" cy="906.5" r="2.8" fill="#3a3a3a" stroke="#555" stroke-width=".6"/><circle cx="39.65" cy="914.40" r="2.8" fill="#808080" stroke="#666" stroke-width=".8"/><circle cx="46.80" cy="906.5" r="2.8" fill="#3a3a3a" stroke="#555" stroke-width=".6"/><circle cx="46.80" cy="914.40" r="2.8" fill="#fff" stroke="#666" stroke-width=".8"/><circle cx="53.95" cy="906.5" r="2.8" fill="#3a3a3a" stroke="#555" stroke-width=".6"/><circle cx="53.95" cy="914.40" r="2.8" fill="#fff" stroke="#666" stroke-width=".8"/><circle cx="61.10" cy="906.5" r="2.8" fill="#808080" stroke="#555" stroke-width=".6"/><circle cx="61.10" cy="914.40" r="2.8" fill="#fff" stroke="#666" stroke-width=".8"/><rect x="115" y="890" width="6" height="24" fill="#555"/><rect x="115" y="899" width="30.5" height="15" fill="#555"/><rect x="116.2" y="900.2" width="3.4" height="3.4" fill="#aaa"/><rect x="121.1" y="900.2" width="3.4" height="3.4" fill="#fff"/><rect x="126.0" y="900.2" width="3.4" height="3.4" fill="#fff"/><rect x="130.9" y="900.2" width="3.4" height="3.4" fill="#aaa"/><rect x="135.8" y="900.2" width="3.4" height="3.4" fill="#fff"/><rect x="140.7" y="900.2" width="3.4" height="3.4" fill="#fff"/><rect x="116.2" y="905.1" width="3.4" height="3.4" fill="#fff"/><rect x="121.1" y="905.1" width="3.4" height="3.4" fill="#fff"/><rect x="126.0" y="905.1" width="3.4" height="3.4" fill="#aaa"/><rect x="130.9" y="905.1" width="3.4" height="3.4" fill="#fff"/><rect x="135.8" y="905.1" width="3.4" height="3.4" fill="#fff"/><rect x="140.7" y="905.1" width="3.4" height="3.4" fill="#aaa"/><rect x="116.2" y="910.0" width="3.4" height="3.4" fill="#fff"/><rect x="121.1" y="910.0" width="3.4" height="3.4" fill="#aaa"/><rect x="126.0" y="910.0" width="3.4" height="3.4" fill="#fff"/><rect x="130.9" y="910.0" width="3.4" height="3.4" fill="#fff"/><rect x="135.8" y="910.0" width="3.4" height="3.4" fill="#aaa"/><rect x="140.7" y="910.0" width="3.4" height="3.4" fill="#fff"/><text x="147" y="898" font-size="12" font-weight="bold" text-anchor="end" fill="#2a2aa0">100</text></svg></div></div>
<div id="doc" class="a"><svg class="a" style="left:0;top:0" width="954" height="795"><path d="M0 494 L11.3 491 L43.3 539 L43.3 557 L33.6 560 L0 511 Z" fill="#d3d9e1"/><path d="M39.6 483 L43.5 482 L43.5 534 L39.6 534 Z" fill="#d3d9e1"/><rect x="941.7" y="325.4" width="12.5" height="67" rx="6.2" fill="#ebddd2"/><path d="M910 348 C914 352 915 362 910 369 Z" fill="#ebddd2"/><path d="M908 397 C920 392 934 386 940 378 C944 376 946 380 944 384 C936 394 922 402 908 407 Z" fill="#ebddd2"/></svg><div id="page"></div>
<div class="a" style="left:99px;top:43px;width:1px;height:760px;background:#fbe3ea"></div>
<div class="a" style="left:112px;top:43px;width:1px;height:760px;background:#fbe3ea"></div>
<div class="a" style="left:62.5px;top:493px;width:26px;height:26px;border-radius:50%;background:#e8e8e8;border:1px solid #d2d2d2"></div>
<svg id="grid" class="a" style="left:0;top:0" width="954" height="795"><style>#grid .d{fill:none;stroke:#bcbcbc;stroke-width:1;stroke-dasharray:5.5 5}#grid .e{fill:none;stroke:#b0b0b0;stroke-width:1;stroke-dasharray:4 6;stroke-dashoffset:2}#grid text{font-family:"Liberation Sans",sans-serif;font-size:25px;fill:#000;stroke:#000;stroke-width:.45}#grid text.g{fill:#00b900;stroke:#00b900}</style><rect x="125.2" y="104.1" width="718.8" height="900" class="d"/><rect x="125.2" y="104.1" width="58.0" height="41.7" class="d"/><rect x="132.2" y="136.2" width="44.5" height="2" fill="#444"/><text transform="translate(177.2,134.3) scale(1.08,1)" text-anchor="end" class="g">7</text><ellipse cx="200.8" cy="124.45" rx="13.8" ry="20.85" class="e" pathLength="80"/><circle cx="201.6" cy="118.6" r="2.4" fill="#000"/><circle cx="201.6" cy="130.8" r="2.4" fill="#000"/><rect x="220.5" y="104.1" width="42.0" height="41.7" class="d"/><text transform="translate(256.5,134.3) scale(1.08,1)" text-anchor="end">3</text><ellipse cx="280.8" cy="124.45" rx="14.2" ry="20.85" class="e" pathLength="80"/><rect x="273.8" y="120.4" width="14" height="2.6" fill="#000"/><rect x="273.8" y="126.2" width="14" height="2.6" fill="#000"/><rect x="299.9" y="104.1" width="56.2" height="41.7" class="d"/><text transform="translate(350.1,134.3) scale(1.08,1)" text-anchor="end">2</text><rect x="359.9" y="104.1" width="28.1" height="41.7" class="d"/><text transform="translate(373.45,134.3) scale(1.08,1)" text-anchor="middle">R</text><rect x="393.0" y="104.1" width="41.9" height="41.7" class="d"/><text transform="translate(428.9,134.3) scale(1.08,1)" text-anchor="end">1</text><rect x="125.2" y="155.93" width="58.0" height="41.7" class="d"/><text transform="translate(177.2,186.13) scale(1.08,1)" text-anchor="end">16</text><ellipse cx="200.8" cy="176.28" rx="13.8" ry="20.85" class="e" pathLength="80"/><circle cx="201.6" cy="170.43" r="2.4" fill="#000"/><circle cx="201.6" cy="182.63" r="2.4" fill="#000"/><rect x="220.5" y="155.93" width="42.0" height="41.7" class="d"/><rect x="227.5" y="188.03" width="28.5" height="2" fill="#444"/><text transform="translate(256.5,186.13) scale(1.08,1)" text-anchor="end" class="g">3</text><ellipse cx="280.8" cy="176.28" rx="14.2" ry="20.85" class="e" pathLength="80"/><rect x="273.8" y="172.23" width="14" height="2.6" fill="#000"/><rect x="273.8" y="178.03" width="14" height="2.6" fill="#000"/><rect x="299.9" y="155.93" width="56.2" height="41.7" class="d"/><text transform="translate(350.1,186.13) scale(1.08,1)" text-anchor="end">5</text><rect x="359.9" y="155.93" width="28.1" height="41.7" class="d"/><text transform="translate(373.45,186.13) scale(1.08,1)" text-anchor="middle">R</text><rect x="393.0" y="155.93" width="41.9" height="41.7" class="d"/><text transform="translate(428.9,186.13) scale(1.08,1)" text-anchor="end">1</text><rect x="125.2" y="207.76" width="58.0" height="41.7" class="d"/><rect x="132.2" y="239.86" width="44.5" height="2" fill="#444"/><text transform="translate(177.2,237.96) scale(1.08,1)" text-anchor="end" class="g">11</text><ellipse cx="200.8" cy="228.11" rx="13.8" ry="20.85" class="e" pathLength="80"/><circle cx="201.6" cy="222.26" r="2.4" fill="#000"/><circle cx="201.6" cy="234.46" r="2.4" fill="#000"/><rect x="220.5" y="207.76" width="42.0" height="41.7" class="d"/><text transform="translate(256.5,237.96) scale(1.08,1)" text-anchor="end">3</text><ellipse cx="280.8" cy="228.11" rx="14.2" ry="20.85" class="e" pathLength="80"/><rect x="273.8" y="224.06" width="14" height="2.6" fill="#000"/><rect x="273.8" y="229.86" width="14" height="2.6" fill="#000"/><rect x="299.9" y="207.76" width="56.2" height="41.7" class="d"/><text transform="translate(350.1,237.96) scale(1.08,1)" text-anchor="end">3</text><rect x="359.9" y="207.76" width="28.1" height="41.7" class="d"/><text transform="translate(373.45,237.96) scale(1.08,1)" text-anchor="middle">R</text><rect x="393.0" y="207.76" width="41.9" height="41.7" class="d"/><text transform="translate(428.9,237.96) scale(1.08,1)" text-anchor="end">2</text><rect x="125.2" y="259.59" width="58.0" height="41.7" class="d"/><text transform="translate(177.2,289.79) scale(1.08,1)" text-anchor="end">19</text><ellipse cx="200.8" cy="279.94" rx="13.8" ry="20.85" class="e" pathLength="80"/><circle cx="201.6" cy="274.09" r="2.4" fill="#000"/><circle cx="201.6" cy="286.29" r="2.4" fill="#000"/><rect x="220.5" y="259.59" width="42.0" height="41.7" class="d"/><text transform="translate(256.5,289.79) scale(1.08,1)" text-anchor="end">3</text><ellipse cx="280.8" cy="279.94" rx="14.2" ry="20.85" class="e" pathLength="80"/><rect x="273.8" y="275.89" width="14" height="2.6" fill="#000"/><rect x="273.8" y="281.69" width="14" height="2.6" fill="#000"/><rect x="299.9" y="259.59" width="56.2" height="41.7" class="d"/><rect x="306.9" y="291.69" width="42.7" height="2" fill="#444"/><text transform="translate(350.1,289.79) scale(1.08,1)" text-anchor="end" class="g">6</text><rect x="359.9" y="259.59" width="28.1" height="41.7" class="d"/><text transform="translate(373.45,289.79) scale(1.08,1)" text-anchor="middle">R</text><rect x="393.0" y="259.59" width="41.9" height="41.7" class="d"/><rect x="400.0" y="291.69" width="28.4" height="2" fill="#444"/><text transform="translate(428.9,289.79) scale(1.08,1)" text-anchor="end" class="g">1</text><rect x="125.2" y="311.42" width="58.0" height="41.7" class="d"/><text transform="translate(177.2,341.62) scale(1.08,1)" text-anchor="end">31</text><ellipse cx="200.8" cy="331.77" rx="13.8" ry="20.85" class="e" pathLength="80"/><circle cx="201.6" cy="325.92" r="2.4" fill="#000"/><circle cx="201.6" cy="338.12" r="2.4" fill="#000"/><rect x="220.5" y="311.42" width="42.0" height="41.7" class="d"/><text transform="translate(256.5,341.62) scale(1.08,1)" text-anchor="end">3</text><ellipse cx="280.8" cy="331.77" rx="14.2" ry="20.85" class="e" pathLength="80"/><rect x="273.8" y="327.72" width="14" height="2.6" fill="#000"/><rect x="273.8" y="333.52" width="14" height="2.6" fill="#000"/><rect x="299.9" y="311.42" width="56.2" height="41.7" class="d"/><rect x="306.9" y="343.52" width="42.7" height="2" fill="#444"/><text transform="translate(350.1,341.62) scale(1.08,1)" text-anchor="end" class="g">10</text><rect x="359.9" y="311.42" width="28.1" height="41.7" class="d"/><text transform="translate(373.45,341.62) scale(1.08,1)" text-anchor="middle">R</text><rect x="393.0" y="311.42" width="41.9" height="41.7" class="d"/><rect x="400.0" y="343.52" width="28.4" height="2" fill="#444"/><text transform="translate(428.9,341.62) scale(1.08,1)" text-anchor="end" class="g">1</text><rect x="125.2" y="363.25" width="58.0" height="41.7" class="d"/><rect x="132.2" y="395.35" width="44.5" height="2" fill="#444"/><text transform="translate(177.2,393.45) scale(1.08,1)" text-anchor="end" class="g">22</text><ellipse cx="200.8" cy="383.6" rx="13.8" ry="20.85" class="e" pathLength="80"/><circle cx="201.6" cy="377.75" r="2.4" fill="#000"/><circle cx="201.6" cy="389.95" r="2.4" fill="#000"/><rect x="220.5" y="363.25" width="42.0" height="41.7" class="d"/><text transform="translate(256.5,393.45) scale(1.08,1)" text-anchor="end">3</text><ellipse cx="280.8" cy="383.6" rx="14.2" ry="20.85" class="e" pathLength="80"/><rect x="273.8" y="379.55" width="14" height="2.6" fill="#000"/><rect x="273.8" y="385.35" width="14" height="2.6" fill="#000"/><rect x="299.9" y="363.25" width="56.2" height="41.7" class="d"/><text transform="translate(350.1,393.45) scale(1.08,1)" text-anchor="end">7</text><rect x="359.9" y="363.25" width="28.1" height="41.7" class="d"/><text transform="translate(373.45,393.45) scale(1.08,1)" text-anchor="middle">R</text><rect x="393.0" y="363.25" width="41.9" height="41.7" class="d"/><text transform="translate(428.9,393.45) scale(1.08,1)" text-anchor="end">1</text><rect x="125.2" y="415.08" width="58.0" height="41.7" class="d"/><text transform="translate(177.2,445.28) scale(1.08,1)" text-anchor="end">29</text><ellipse cx="200.8" cy="435.43" rx="13.8" ry="20.85" class="e" pathLength="80"/><circle cx="201.6" cy="429.58" r="2.4" fill="#000"/><circle cx="201.6" cy="441.78" r="2.4" fill="#000"/><rect x="220.5" y="415.08" width="42.0" height="41.7" class="d"/><text transform="translate(256.5,445.28) scale(1.08,1)" text-anchor="end">3</text><ellipse cx="280.8" cy="435.43" rx="14.2" ry="20.85" class="e" pathLength="80"/><rect x="273.8" y="431.38" width="14" height="2.6" fill="#000"/><rect x="273.8" y="437.18" width="14" height="2.6" fill="#000"/><rect x="299.9" y="415.08" width="56.2" height="41.7" class="d"/><rect x="306.9" y="447.18" width="42.7" height="2" fill="#444"/><text transform="translate(350.1,445.28) scale(1.08,1)" text-anchor="end" class="g">9</text><rect x="359.9" y="415.08" width="28.1" height="41.7" class="d"/><text transform="translate(373.45,445.28) scale(1.08,1)" text-anchor="middle">R</text><rect x="393.0" y="415.08" width="41.9" height="41.7" class="d"/><text transform="translate(428.9,445.28) scale(1.08,1)" text-anchor="end">2</text><rect x="125.2" y="466.91" width="58.0" height="41.7" class="d"/><text transform="translate(177.2,497.11) scale(1.08,1)" text-anchor="end">5</text><ellipse cx="200.8" cy="487.26" rx="13.8" ry="20.85" class="e" pathLength="80"/><circle cx="201.6" cy="481.41" r="2.4" fill="#000"/><circle cx="201.6" cy="493.61" r="2.4" fill="#000"/><rect x="220.5" y="466.91" width="42.0" height="41.7" class="d"/><rect x="227.5" y="499.01" width="28.5" height="2" fill="#444"/><text transform="translate(256.5,497.11) scale(1.08,1)" text-anchor="end" class="g">3</text><ellipse cx="280.8" cy="487.26" rx="14.2" ry="20.85" class="e" pathLength="80"/><rect x="273.8" y="483.21" width="14" height="2.6" fill="#000"/><rect x="273.8" y="489.01" width="14" height="2.6" fill="#000"/><rect x="299.9" y="466.91" width="56.2" height="41.7" class="d"/><text transform="translate(350.1,497.11) scale(1.08,1)" text-anchor="end">1</text><rect x="359.9" y="466.91" width="28.1" height="41.7" class="d"/><text transform="translate(373.45,497.11) scale(1.08,1)" text-anchor="middle">R</text><rect x="393.0" y="466.91" width="41.9" height="41.7" class="d"/><text transform="translate(428.9,497.11) scale(1.08,1)" text-anchor="end">2</text><rect x="125.2" y="518.74" width="58.0" height="41.7" class="d"/><text transform="translate(177.2,548.94) scale(1.08,1)" text-anchor="end">13</text><ellipse cx="200.8" cy="539.09" rx="13.8" ry="20.85" class="e" pathLength="80"/><circle cx="201.6" cy="533.24" r="2.4" fill="#000"/><circle cx="201.6" cy="545.44" r="2.4" fill="#000"/><rect x="220.5" y="518.74" width="42.0" height="41.7" class="d"/><rect x="227.5" y="550.84" width="28.5" height="2" fill="#444"/><text transform="translate(256.5,548.94) scale(1.08,1)" text-anchor="end" class="g">3</text><ellipse cx="280.8" cy="539.09" rx="14.2" ry="20.85" class="e" pathLength="80"/><rect x="273.8" y="535.04" width="14" height="2.6" fill="#000"/><rect x="273.8" y="540.84" width="14" height="2.6" fill="#000"/><rect x="299.9" y="518.74" width="56.2" height="41.7" class="d"/><text transform="translate(350.1,548.94) scale(1.08,1)" text-anchor="end">4</text><rect x="359.9" y="518.74" width="28.1" height="41.7" class="d"/><text transform="translate(373.45,548.94) scale(1.08,1)" text-anchor="middle">R</text><rect x="393.0" y="518.74" width="41.9" height="41.7" class="d"/><rect x="400.0" y="550.84" width="28.4" height="2" fill="#444"/><text transform="translate(428.9,548.94) scale(1.08,1)" text-anchor="end" class="g">1</text><rect x="125.2" y="570.57" width="58.0" height="41.7" class="d"/><rect x="132.2" y="602.67" width="44.5" height="2" fill="#444"/><text transform="translate(177.2,600.77) scale(1.08,1)" text-anchor="end" class="g">25</text><ellipse cx="200.8" cy="590.92" rx="13.8" ry="20.85" class="e" pathLength="80"/><circle cx="201.6" cy="585.07" r="2.4" fill="#000"/><circle cx="201.6" cy="597.27" r="2.4" fill="#000"/><rect x="220.5" y="570.57" width="42.0" height="41.7" class="d"/><text transform="translate(256.5,600.77) scale(1.08,1)" text-anchor="end">3</text><ellipse cx="280.8" cy="590.92" rx="14.2" ry="20.85" class="e" pathLength="80"/><rect x="273.8" y="586.87" width="14" height="2.6" fill="#000"/><rect x="273.8" y="592.67" width="14" height="2.6" fill="#000"/><rect x="299.9" y="570.57" width="56.2" height="41.7" class="d"/><text transform="translate(350.1,600.77) scale(1.08,1)" text-anchor="end">8</text><rect x="359.9" y="570.57" width="28.1" height="41.7" class="d"/><text transform="translate(373.45,600.77) scale(1.08,1)" text-anchor="middle">R</text><rect x="393.0" y="570.57" width="41.9" height="41.7" class="d"/><text transform="translate(428.9,600.77) scale(1.08,1)" text-anchor="end">1</text><rect x="125.2" y="622.4" width="58.0" height="41.7" class="d"/><text transform="translate(177.2,652.6) scale(1.08,1)" text-anchor="end">20</text><ellipse cx="200.8" cy="642.75" rx="13.8" ry="20.85" class="e" pathLength="80"/><circle cx="201.6" cy="636.9" r="2.4" fill="#000"/><circle cx="201.6" cy="649.1" r="2.4" fill="#000"/><rect x="220.5" y="622.4" width="42.0" height="41.7" class="d"/><rect x="227.5" y="654.5" width="28.5" height="2" fill="#444"/><text transform="translate(256.5,652.6) scale(1.08,1)" text-anchor="end" class="g">3</text><ellipse cx="280.8" cy="642.75" rx="14.2" ry="20.85" class="e" pathLength="80"/><rect x="273.8" y="638.7" width="14" height="2.6" fill="#000"/><rect x="273.8" y="644.5" width="14" height="2.6" fill="#000"/><rect x="299.9" y="622.4" width="56.2" height="41.7" class="d"/><text transform="translate(350.1,652.6) scale(1.08,1)" text-anchor="end">6</text><rect x="359.9" y="622.4" width="28.1" height="41.7" class="d"/><text transform="translate(373.45,652.6) scale(1.08,1)" text-anchor="middle">R</text><rect x="393.0" y="622.4" width="41.9" height="41.7" class="d"/><text transform="translate(428.9,652.6) scale(1.08,1)" text-anchor="end">2</text><rect x="125.2" y="674.23" width="58.0" height="41.7" class="d"/><text transform="translate(177.2,704.43) scale(1.08,1)" text-anchor="end">8</text><ellipse cx="200.8" cy="694.58" rx="13.8" ry="20.85" class="e" pathLength="80"/><circle cx="201.6" cy="688.73" r="2.4" fill="#000"/><circle cx="201.6" cy="700.93" r="2.4" fill="#000"/><rect x="220.5" y="674.23" width="42.0" height="41.7" class="d"/><rect x="227.5" y="706.33" width="28.5" height="2" fill="#444"/><text transform="translate(256.5,704.43) scale(1.08,1)" text-anchor="end" class="g">3</text><ellipse cx="280.8" cy="694.58" rx="14.2" ry="20.85" class="e" pathLength="80"/><rect x="273.8" y="690.53" width="14" height="2.6" fill="#000"/><rect x="273.8" y="696.33" width="14" height="2.6" fill="#000"/><rect x="299.9" y="674.23" width="56.2" height="41.7" class="d"/><text transform="translate(350.1,704.43) scale(1.08,1)" text-anchor="end">2</text><rect x="359.9" y="674.23" width="28.1" height="41.7" class="d"/><text transform="translate(373.45,704.43) scale(1.08,1)" text-anchor="middle">R</text><rect x="393.0" y="674.23" width="41.9" height="41.7" class="d"/><text transform="translate(428.9,704.43) scale(1.08,1)" text-anchor="end">2</text><rect x="125.2" y="726.06" width="58.0" height="41.7" class="d"/><text transform="translate(177.2,756.26) scale(1.08,1)" text-anchor="end">10</text><ellipse cx="200.8" cy="746.41" rx="13.8" ry="20.85" class="e" pathLength="80"/><circle cx="201.6" cy="740.56" r="2.4" fill="#000"/><circle cx="201.6" cy="752.76" r="2.4" fill="#000"/><rect x="220.5" y="726.06" width="42.0" height="41.7" class="d"/><text transform="translate(256.5,756.26) scale(1.08,1)" text-anchor="end">3</text><ellipse cx="280.8" cy="746.41" rx="14.2" ry="20.85" class="e" pathLength="80"/><rect x="273.8" y="742.36" width="14" height="2.6" fill="#000"/><rect x="273.8" y="748.16" width="14" height="2.6" fill="#000"/><rect x="299.9" y="726.06" width="56.2" height="41.7" class="d"/><rect x="306.9" y="758.16" width="42.7" height="2" fill="#444"/><text transform="translate(350.1,756.26) scale(1.08,1)" text-anchor="end" class="g">3</text><rect x="359.9" y="726.06" width="28.1" height="41.7" class="d"/><text transform="translate(373.45,756.26) scale(1.08,1)" text-anchor="middle">R</text><rect x="393.0" y="726.06" width="41.9" height="41.7" class="d"/><text transform="translate(428.9,756.26) scale(1.08,1)" text-anchor="end">1</text><rect x="125.2" y="777.89" width="58.0" height="41.7" class="d"/><rect x="132.2" y="809.99" width="44.5" height="2" fill="#444"/><text transform="translate(177.2,808.09) scale(1.08,1)" text-anchor="end" class="g">17</text><ellipse cx="200.8" cy="798.24" rx="13.8" ry="20.85" class="e" pathLength="80"/><circle cx="201.6" cy="792.39" r="2.4" fill="#000"/><circle cx="201.6" cy="804.59" r="2.4" fill="#000"/><rect x="220.5" y="777.89" width="42.0" height="41.7" class="d"/><text transform="translate(256.5,808.09) scale(1.08,1)" text-anchor="end">3</text><ellipse cx="280.8" cy="798.24" rx="14.2" ry="20.85" class="e" pathLength="80"/><rect x="273.8" y="794.19" width="14" height="2.6" fill="#000"/><rect x="273.8" y="799.99" width="14" height="2.6" fill="#000"/><rect x="299.9" y="777.89" width="56.2" height="41.7" class="d"/><text transform="translate(350.1,808.09) scale(1.08,1)" text-anchor="end">5</text><rect x="359.9" y="777.89" width="28.1" height="41.7" class="d"/><text transform="translate(373.45,808.09) scale(1.08,1)" text-anchor="middle">R</text><rect x="393.0" y="777.89" width="41.9" height="41.7" class="d"/><text transform="translate(428.9,808.09) scale(1.08,1)" text-anchor="end">2</text><rect x="519.9" y="104.1" width="58.0" height="41.7" class="d"/><text transform="translate(571.9,134.3) scale(1.08,1)" text-anchor="end">31</text><ellipse cx="595.5" cy="124.45" rx="13.8" ry="20.85" class="e" pathLength="80"/><circle cx="596.3" cy="118.6" r="2.4" fill="#000"/><circle cx="596.3" cy="130.8" r="2.4" fill="#000"/><rect x="615.2" y="104.1" width="42.0" height="41.7" class="d"/><rect x="622.2" y="136.2" width="28.5" height="2" fill="#444"/><text transform="translate(651.2,134.3) scale(1.08,1)" text-anchor="end" class="g">3</text><ellipse cx="675.5" cy="124.45" rx="14.2" ry="20.85" class="e" pathLength="80"/><rect x="668.5" y="120.4" width="14" height="2.6" fill="#000"/><rect x="668.5" y="126.2" width="14" height="2.6" fill="#000"/><rect x="694.6" y="104.1" width="56.2" height="41.7" class="d"/><text transform="translate(744.8,134.3) scale(1.08,1)" text-anchor="end">10</text><rect x="754.6" y="104.1" width="28.1" height="41.7" class="d"/><text transform="translate(768.15,134.3) scale(1.08,1)" text-anchor="middle">R</text><rect x="787.7" y="104.1" width="41.9" height="41.7" class="d"/><rect x="794.7" y="136.2" width="28.4" height="2" fill="#444"/><text transform="translate(823.6,134.3) scale(1.08,1)" text-anchor="end" class="g">1</text><rect x="519.9" y="155.93" width="58.0" height="41.7" class="d"/><text transform="translate(571.9,186.13) scale(1.08,1)" text-anchor="end">20</text><ellipse cx="595.5" cy="176.28" rx="13.8" ry="20.85" class="e" pathLength="80"/><circle cx="596.3" cy="170.43" r="2.4" fill="#000"/><circle cx="596.3" cy="182.63" r="2.4" fill="#000"/><rect x="615.2" y="155.93" width="42.0" height="41.7" class="d"/><rect x="622.2" y="188.03" width="28.5" height="2" fill="#444"/><text transform="translate(651.2,186.13) scale(1.08,1)" text-anchor="end" class="g">3</text><ellipse cx="675.5" cy="176.28" rx="14.2" ry="20.85" class="e" pathLength="80"/><rect x="668.5" y="172.23" width="14" height="2.6" fill="#000"/><rect x="668.5" y="178.03" width="14" height="2.6" fill="#000"/><rect x="694.6" y="155.93" width="56.2" height="41.7" class="d"/><text transform="translate(744.8,186.13) scale(1.08,1)" text-anchor="end">6</text><rect x="754.6" y="155.93" width="28.1" height="41.7" class="d"/><text transform="translate(768.15,186.13) scale(1.08,1)" text-anchor="middle">R</text><rect x="787.7" y="155.93" width="41.9" height="41.7" class="d"/><rect x="794.7" y="188.03" width="28.4" height="2" fill="#444"/><text transform="translate(823.6,186.13) scale(1.08,1)" text-anchor="end" class="g">2</text><rect x="519.9" y="207.76" width="58.0" height="41.7" class="d"/><text transform="translate(571.9,237.96) scale(1.08,1)" text-anchor="end">31</text><ellipse cx="595.5" cy="228.11" rx="13.8" ry="20.85" class="e" pathLength="80"/><circle cx="596.3" cy="222.26" r="2.4" fill="#000"/><circle cx="596.3" cy="234.46" r="2.4" fill="#000"/><rect x="615.2" y="207.76" width="42.0" height="41.7" class="d"/><rect x="622.2" y="239.86" width="28.5" height="2" fill="#444"/><text transform="translate(651.2,237.96) scale(1.08,1)" text-anchor="end" class="g">3</text><ellipse cx="675.5" cy="228.11" rx="14.2" ry="20.85" class="e" pathLength="80"/><rect x="668.5" y="224.06" width="14" height="2.6" fill="#000"/><rect x="668.5" y="229.86" width="14" height="2.6" fill="#000"/><rect x="694.6" y="207.76" width="56.2" height="41.7" class="d"/><text transform="translate(744.8,237.96) scale(1.08,1)" text-anchor="end">10</text><rect x="754.6" y="207.76" width="28.1" height="41.7" class="d"/><text transform="translate(768.15,237.96) scale(1.08,1)" text-anchor="middle">R</text><rect x="787.7" y="207.76" width="41.9" height="41.7" class="d"/><rect x="794.7" y="239.86" width="28.4" height="2" fill="#444"/><text transform="translate(823.6,237.96) scale(1.08,1)" text-anchor="end" class="g">1</text><rect x="519.9" y="259.59" width="58.0" height="41.7" class="d"/><text transform="translate(571.9,289.79) scale(1.08,1)" text-anchor="end">13</text><ellipse cx="595.5" cy="279.94" rx="13.8" ry="20.85" class="e" pathLength="80"/><circle cx="596.3" cy="274.09" r="2.4" fill="#000"/><circle cx="596.3" cy="286.29" r="2.4" fill="#000"/><rect x="615.2" y="259.59" width="42.0" height="41.7" class="d"/><text transform="translate(651.2,289.79) scale(1.08,1)" text-anchor="end">3</text><ellipse cx="675.5" cy="279.94" rx="14.2" ry="20.85" class="e" pathLength="80"/><rect x="668.5" y="275.89" width="14" height="2.6" fill="#000"/><rect x="668.5" y="281.69" width="14" height="2.6" fill="#000"/><rect x="694.6" y="259.59" width="56.2" height="41.7" class="d"/><rect x="701.6" y="291.69" width="42.7" height="2" fill="#444"/><text transform="translate(744.8,289.79) scale(1.08,1)" text-anchor="end" class="g">4</text><rect x="754.6" y="259.59" width="28.1" height="41.7" class="d"/><text transform="translate(768.15,289.79) scale(1.08,1)" text-anchor="middle">R</text><rect x="787.7" y="259.59" width="41.9" height="41.7" class="d"/><text transform="translate(823.6,289.79) scale(1.08,1)" text-anchor="end">1</text><rect x="519.9" y="311.42" width="58.0" height="41.7" class="d"/><rect x="526.9" y="343.52" width="44.5" height="2" fill="#444"/><text transform="translate(571.9,341.62) scale(1.08,1)" text-anchor="end" class="g">23</text><ellipse cx="595.5" cy="331.77" rx="13.8" ry="20.85" class="e" pathLength="80"/><circle cx="596.3" cy="325.92" r="2.4" fill="#000"/><circle cx="596.3" cy="338.12" r="2.4" fill="#000"/><rect x="615.2" y="311.42" width="42.0" height="41.7" class="d"/><text transform="translate(651.2,341.62) scale(1.08,1)" text-anchor="end">3</text><ellipse cx="675.5" cy="331.77" rx="14.2" ry="20.85" class="e" pathLength="80"/><rect x="668.5" y="327.72" width="14" height="2.6" fill="#000"/><rect x="668.5" y="333.52" width="14" height="2.6" fill="#000"/><rect x="694.6" y="311.42" width="56.2" height="41.7" class="d"/><text transform="translate(744.8,341.62) scale(1.08,1)" text-anchor="end">7</text><rect x="754.6" y="311.42" width="28.1" height="41.7" class="d"/><text transform="translate(768.15,341.62) scale(1.08,1)" text-anchor="middle">R</text><rect x="787.7" y="311.42" width="41.9" height="41.7" class="d"/><text transform="translate(823.6,341.62) scale(1.08,1)" text-anchor="end">2</text><rect x="519.9" y="363.25" width="58.0" height="41.7" class="d"/><text transform="translate(571.9,393.45) scale(1.08,1)" text-anchor="end">22</text><ellipse cx="595.5" cy="383.6" rx="13.8" ry="20.85" class="e" pathLength="80"/><circle cx="596.3" cy="377.75" r="2.4" fill="#000"/><circle cx="596.3" cy="389.95" r="2.4" fill="#000"/><rect x="615.2" y="363.25" width="42.0" height="41.7" class="d"/><rect x="622.2" y="395.35" width="28.5" height="2" fill="#444"/><text transform="translate(651.2,393.45) scale(1.08,1)" text-anchor="end" class="g">3</text><ellipse cx="675.5" cy="383.6" rx="14.2" ry="20.85" class="e" pathLength="80"/><rect x="668.5" y="379.55" width="14" height="2.6" fill="#000"/><rect x="668.5" y="385.35" width="14" height="2.6" fill="#000"/><rect x="694.6" y="363.25" width="56.2" height="41.7" class="d"/><text transform="translate(744.8,393.45) scale(1.08,1)" text-anchor="end">7</text><rect x="754.6" y="363.25" width="28.1" height="41.7" class="d"/><text transform="translate(768.15,393.45) scale(1.08,1)" text-anchor="middle">R</text><rect x="787.7" y="363.25" width="41.9" height="41.7" class="d"/><text transform="translate(823.6,393.45) scale(1.08,1)" text-anchor="end">1</text><rect x="519.9" y="415.08" width="58.0" height="41.7" class="d"/><rect x="526.9" y="447.18" width="44.5" height="2" fill="#444"/><text transform="translate(571.9,445.28) scale(1.08,1)" text-anchor="end" class="g">32</text><ellipse cx="595.5" cy="435.43" rx="13.8" ry="20.85" class="e" pathLength="80"/><circle cx="596.3" cy="429.58" r="2.4" fill="#000"/><circle cx="596.3" cy="441.78" r="2.4" fill="#000"/><rect x="615.2" y="415.08" width="42.0" height="41.7" class="d"/><text transform="translate(651.2,445.28) scale(1.08,1)" text-anchor="end">3</text><ellipse cx="675.5" cy="435.43" rx="14.2" ry="20.85" class="e" pathLength="80"/><rect x="668.5" y="431.38" width="14" height="2.6" fill="#000"/><rect x="668.5" y="437.18" width="14" height="2.6" fill="#000"/><rect x="694.6" y="415.08" width="56.2" height="41.7" class="d"/><text transform="translate(744.8,445.28) scale(1.08,1)" text-anchor="end">10</text><rect x="754.6" y="415.08" width="28.1" height="41.7" class="d"/><text transform="translate(768.15,445.28) scale(1.08,1)" text-anchor="middle">R</text><rect x="787.7" y="415.08" width="41.9" height="41.7" class="d"/><text transform="translate(823.6,445.28) scale(1.08,1)" text-anchor="end">2</text><rect x="519.9" y="466.91" width="58.0" height="41.7" class="d"/><text transform="translate(571.9,497.11) scale(1.08,1)" text-anchor="end">8</text><ellipse cx="595.5" cy="487.26" rx="13.8" ry="20.85" class="e" pathLength="80"/><circle cx="596.3" cy="481.41" r="2.4" fill="#000"/><circle cx="596.3" cy="493.61" r="2.4" fill="#000"/><rect x="615.2" y="466.91" width="42.0" height="41.7" class="d"/><rect x="622.2" y="499.01" width="28.5" height="2" fill="#444"/><text transform="translate(651.2,497.11) scale(1.08,1)" text-anchor="end" class="g">3</text><ellipse cx="675.5" cy="487.26" rx="14.2" ry="20.85" class="e" pathLength="80"/><rect x="668.5" y="483.21" width="14" height="2.6" fill="#000"/><rect x="668.5" y="489.01" width="14" height="2.6" fill="#000"/><rect x="694.6" y="466.91" width="56.2" height="41.7" class="d"/><text transform="translate(744.8,497.11) scale(1.08,1)" text-anchor="end">2</text><rect x="754.6" y="466.91" width="28.1" height="41.7" class="d"/><text transform="translate(768.15,497.11) scale(1.08,1)" text-anchor="middle">R</text><rect x="787.7" y="466.91" width="41.9" height="41.7" class="d"/><text transform="translate(823.6,497.11) scale(1.08,1)" text-anchor="end">2</text><rect x="519.9" y="518.74" width="58.0" height="41.7" class="d"/><text transform="translate(571.9,548.94) scale(1.08,1)" text-anchor="end">7</text><ellipse cx="595.5" cy="539.09" rx="13.8" ry="20.85" class="e" pathLength="80"/><circle cx="596.3" cy="533.24" r="2.4" fill="#000"/><circle cx="596.3" cy="545.44" r="2.4" fill="#000"/><rect x="615.2" y="518.74" width="42.0" height="41.7" class="d"/><rect x="622.2" y="550.84" width="28.5" height="2" fill="#444"/><text transform="translate(651.2,548.94) scale(1.08,1)" text-anchor="end" class="g">3</text><ellipse cx="675.5" cy="539.09" rx="14.2" ry="20.85" class="e" pathLength="80"/><rect x="668.5" y="535.04" width="14" height="2.6" fill="#000"/><rect x="668.5" y="540.84" width="14" height="2.6" fill="#000"/><rect x="694.6" y="518.74" width="56.2" height="41.7" class="d"/><text transform="translate(744.8,548.94) scale(1.08,1)" text-anchor="end">2</text><rect x="754.6" y="518.74" width="28.1" height="41.7" class="d"/><text transform="translate(768.15,548.94) scale(1.08,1)" text-anchor="middle">R</text><rect x="787.7" y="518.74" width="41.9" height="41.7" class="d"/><text transform="translate(823.6,548.94) scale(1.08,1)" text-anchor="end">1</text><rect x="519.9" y="570.57" width="58.0" height="41.7" class="d"/><text transform="translate(571.9,600.77) scale(1.08,1)" text-anchor="end">25</text><ellipse cx="595.5" cy="590.92" rx="13.8" ry="20.85" class="e" pathLength="80"/><circle cx="596.3" cy="585.07" r="2.4" fill="#000"/><circle cx="596.3" cy="597.27" r="2.4" fill="#000"/><rect x="615.2" y="570.57" width="42.0" height="41.7" class="d"/><text transform="translate(651.2,600.77) scale(1.08,1)" text-anchor="end">3</text><ellipse cx="675.5" cy="590.92" rx="14.2" ry="20.85" class="e" pathLength="80"/><rect x="668.5" y="586.87" width="14" height="2.6" fill="#000"/><rect x="668.5" y="592.67" width="14" height="2.6" fill="#000"/><rect x="694.6" y="570.57" width="56.2" height="41.7" class="d"/><rect x="701.6" y="602.67" width="42.7" height="2" fill="#444"/><text transform="translate(744.8,600.77) scale(1.08,1)" text-anchor="end" class="g">8</text><rect x="754.6" y="570.57" width="28.1" height="41.7" class="d"/><text transform="translate(768.15,600.77) scale(1.08,1)" text-anchor="middle">R</text><rect x="787.7" y="570.57" width="41.9" height="41.7" class="d"/><text transform="translate(823.6,600.77) scale(1.08,1)" text-anchor="end">1</text><rect x="519.9" y="622.4" width="58.0" height="41.7" class="d"/><text transform="translate(571.9,652.6) scale(1.08,1)" text-anchor="end">5</text><ellipse cx="595.5" cy="642.75" rx="13.8" ry="20.85" class="e" pathLength="80"/><circle cx="596.3" cy="636.9" r="2.4" fill="#000"/><circle cx="596.3" cy="649.1" r="2.4" fill="#000"/><rect x="615.2" y="622.4" width="42.0" height="41.7" class="d"/><text transform="translate(651.2,652.6) scale(1.08,1)" text-anchor="end">3</text><ellipse cx="675.5" cy="642.75" rx="14.2" ry="20.85" class="e" pathLength="80"/><rect x="668.5" y="638.7" width="14" height="2.6" fill="#000"/><rect x="668.5" y="644.5" width="14" height="2.6" fill="#000"/><rect x="694.6" y="622.4" width="56.2" height="41.7" class="d"/><rect x="701.6" y="654.5" width="42.7" height="2" fill="#444"/><text transform="translate(744.8,652.6) scale(1.08,1)" text-anchor="end" class="g">1</text><rect x="754.6" y="622.4" width="28.1" height="41.7" class="d"/><text transform="translate(768.15,652.6) scale(1.08,1)" text-anchor="middle">R</text><rect x="787.7" y="622.4" width="41.9" height="41.7" class="d"/><rect x="794.7" y="654.5" width="28.4" height="2" fill="#444"/><text transform="translate(823.6,652.6) scale(1.08,1)" text-anchor="end" class="g">2</text><rect x="519.9" y="674.23" width="58.0" height="41.7" class="d"/><rect x="526.9" y="706.33" width="44.5" height="2" fill="#444"/><text transform="translate(571.9,704.43) scale(1.08,1)" text-anchor="end" class="g">32</text><ellipse cx="595.5" cy="694.58" rx="13.8" ry="20.85" class="e" pathLength="80"/><circle cx="596.3" cy="688.73" r="2.4" fill="#000"/><circle cx="596.3" cy="700.93" r="2.4" fill="#000"/><rect x="615.2" y="674.23" width="42.0" height="41.7" class="d"/><text transform="translate(651.2,704.43) scale(1.08,1)" text-anchor="end">3</text><ellipse cx="675.5" cy="694.58" rx="14.2" ry="20.85" class="e" pathLength="80"/><rect x="668.5" y="690.53" width="14" height="2.6" fill="#000"/><rect x="668.5" y="696.33" width="14" height="2.6" fill="#000"/><rect x="694.6" y="674.23" width="56.2" height="41.7" class="d"/><text transform="translate(744.8,704.43) scale(1.08,1)" text-anchor="end">10</text><rect x="754.6" y="674.23" width="28.1" height="41.7" class="d"/><text transform="translate(768.15,704.43) scale(1.08,1)" text-anchor="middle">R</text><rect x="787.7" y="674.23" width="41.9" height="41.7" class="d"/><text transform="translate(823.6,704.43) scale(1.08,1)" text-anchor="end">2</text><rect x="519.9" y="726.06" width="58.0" height="41.7" class="d"/><text transform="translate(571.9,756.26) scale(1.08,1)" text-anchor="end">23</text><ellipse cx="595.5" cy="746.41" rx="13.8" ry="20.85" class="e" pathLength="80"/><circle cx="596.3" cy="740.56" r="2.4" fill="#000"/><circle cx="596.3" cy="752.76" r="2.4" fill="#000"/><rect x="615.2" y="726.06" width="42.0" height="41.7" class="d"/><text transform="translate(651.2,756.26) scale(1.08,1)" text-anchor="end">3</text><ellipse cx="675.5" cy="746.41" rx="14.2" ry="20.85" class="e" pathLength="80"/><rect x="668.5" y="742.36" width="14" height="2.6" fill="#000"/><rect x="668.5" y="748.16" width="14" height="2.6" fill="#000"/><rect x="694.6" y="726.06" width="56.2" height="41.7" class="d"/><rect x="701.6" y="758.16" width="42.7" height="2" fill="#444"/><text transform="translate(744.8,756.26) scale(1.08,1)" text-anchor="end" class="g">7</text><rect x="754.6" y="726.06" width="28.1" height="41.7" class="d"/><text transform="translate(768.15,756.26) scale(1.08,1)" text-anchor="middle">R</text><rect x="787.7" y="726.06" width="41.9" height="41.7" class="d"/><rect x="794.7" y="758.16" width="28.4" height="2" fill="#444"/><text transform="translate(823.6,756.26) scale(1.08,1)" text-anchor="end" class="g">2</text><rect x="519.9" y="777.89" width="58.0" height="41.7" class="d"/><text transform="translate(571.9,808.09) scale(1.08,1)" text-anchor="end">16</text><ellipse cx="595.5" cy="798.24" rx="13.8" ry="20.85" class="e" pathLength="80"/><circle cx="596.3" cy="792.39" r="2.4" fill="#000"/><circle cx="596.3" cy="804.59" r="2.4" fill="#000"/><rect x="615.2" y="777.89" width="42.0" height="41.7" class="d"/><rect x="622.2" y="809.99" width="28.5" height="2" fill="#444"/><text transform="translate(651.2,808.09) scale(1.08,1)" text-anchor="end" class="g">3</text><ellipse cx="675.5" cy="798.24" rx="14.2" ry="20.85" class="e" pathLength="80"/><rect x="668.5" y="794.19" width="14" height="2.6" fill="#000"/><rect x="668.5" y="799.99" width="14" height="2.6" fill="#000"/><rect x="694.6" y="777.89" width="56.2" height="41.7" class="d"/><text transform="translate(744.8,808.09) scale(1.08,1)" text-anchor="end">5</text><rect x="754.6" y="777.89" width="28.1" height="41.7" class="d"/><text transform="translate(768.15,808.09) scale(1.08,1)" text-anchor="middle">R</text><rect x="787.7" y="777.89" width="41.9" height="41.7" class="d"/><text transform="translate(823.6,808.09) scale(1.08,1)" text-anchor="end">1</text></svg>
</div>
<div id="infobar" class="a">
<span class="a" style="left:31.50px;top:7.50px;font-size:11.5px;font-weight:700;color:#111;white-space:nowrap;transform:scaleX(1.0705);transform-origin:0 0;">Wie du dir neue Varianten ausrechnen lässt:</span><span class="a" style="left:296.79px;top:7.50px;font-size:11.5px;color:#222;white-space:nowrap;transform:scaleX(1.0054);transform-origin:0 0;">Klicke einfach im Kasten rechts oben auf den blauen Würfel. Der Worksheet Crafter erstellt dann eine neue Variante d...</span><span class="a" style="left:920.42px;top:7.50px;font-size:11.5px;color:#2a50b8;white-space:nowrap;transform:scaleX(0.9800);transform-origin:0 0;text-decoration:underline">Mehr</span>
<svg class="a" style="left:10px;top:5px" width="14" height="18" viewBox="0 0 14 18"><defs><radialGradient id="bulb" cx="40%" cy="35%" r="60%"><stop offset="0" stop-color="#fffbd0"/><stop offset=".6" stop-color="#f5e66a"/><stop offset="1" stop-color="#d9c23a"/></radialGradient></defs><path d="M7 .5 C10.8 .5 13 3 13 6 C13 8.5 11 10 10.5 12.5 L3.5 12.5 C3 10 1 8.5 1 6 C1 3 3.2 .5 7 .5 Z" fill="url(#bulb)" stroke="#d6c24a" stroke-width=".6"/><rect x="3.8" y="12.5" width="6.4" height="3.5" rx="1" fill="#6a6a72"/><path d="M5 16 h4 l-1 1.5 h-2 z" fill="#55555c"/></svg>
</div>
<div id="rightpanel" class="a"></div>
<div class="rhdr" style="left:1185.5px;top:96.6px;width:390.3px;height:32px"><b style="position:absolute;left:11px;top:13px;width:0;height:0;border-left:5px solid transparent;border-right:5px solid transparent;border-top:5px solid #dfe7f0"></b></div><span class="a" style="left:1330.62px;top:105.30px;font-size:13.3px;color:#fff;white-space:nowrap;transform:scaleX(0.9762);transform-origin:0 0;">Rechenpäckchen</span><div class="a" style="left:1185.5px;top:128.6px;width:390.3px;height:318px;background:linear-gradient(#eef4fb 40%,#e8e9ea);border:1px solid #c4c8cc;border-top:none;border-radius:0 0 4px 4px"></div><div class="a" style="left:1195.4px;top:142.8px;width:14.2px;height:14.2px;border:1.3px solid #6a6a6a;border-radius:3px;background:#fff"></div><svg class="a" style="left:1195.4px;top:142.8px" width="14.2" height="14.2"><path d="M3.2 7.2 L6 10 L11 4.3" fill="none" stroke="#333" stroke-width="2.2"/></svg><span class="a" style="left:1216.25px;top:143.75px;font-size:12px;color:#222;white-space:nowrap;transform:scaleX(0.9796);transform-origin:0 0;">Aufgabengenerator aktiviert</span><div class="a" style="left:1513.4px;top:138px;width:52.6px;height:24.2px;border:1px solid #c6c6c6;border-radius:3px;background:linear-gradient(#fbfbfb,#ececec)"></div><svg class="a" style="left:1518px;top:141px" width="18" height="18"><path d="M1 4 L9.5 2 L16 4.5 L16 13 L8.5 16.5 L1.5 13.5 Z" fill="#2630c8" stroke="#0c1070" stroke-width=".6"/><path d="M9.5 2 L16 4.5 L11 6.5 L1 4 Z" fill="#5560f0"/><path d="M11 6.5 L16 4.5 L16 13 L11 16 Z" fill="#141a90"/><circle cx="4" cy="12" r="1" fill="#fff"/><circle cx="6.5" cy="9" r="1" fill="#fff"/><circle cx="9" cy="6.5" r="1" fill="#fff"/><circle cx="13.5" cy="8" r=".8" fill="#fff"/><circle cx="13.5" cy="12" r=".8" fill="#fff"/></svg><span class="a" style="left:1539.51px;top:144.00px;font-size:12px;color:#222;white-space:nowrap;transform:scaleX(0.9900);transform-origin:0 0;">Neu</span><div class="a" style="left:1195.9px;top:169px;width:47.8px;height:23px;background:#fafafa;border:1px solid #d4d4d4;border-bottom:none;border-radius:2px 2px 0 0"></div><div class="a" style="left:1243.7px;top:171.2px;width:46.7px;height:20.5px;background:#eeeff1;border:1px solid #d8d8d8;border-bottom:none;border-left:none"></div><span class="a" style="left:1206.77px;top:174.10px;font-size:12px;color:#222;white-space:nowrap;transform:scaleX(0.9841);transform-origin:0 0;">Feld</span><span class="a" style="left:1254.00px;top:175.40px;font-size:12px;color:#222;white-space:nowrap;">Form</span><div class="a" style="left:1195.6px;top:191.3px;width:370px;height:245.5px;background:#fff;border:1px solid #cfcfcf;border-top:2px solid #c6c6c6"></div><div class="a" style="left:1196.6px;top:189.5px;width:46.2px;height:4px;background:#fafafa"></div><span class="a" style="left:1202.52px;top:204.90px;font-size:12px;color:#222;white-space:nowrap;transform:scaleX(0.9833);transform-origin:0 0;">Rechenvorteil:</span><div class="a" style="left:1310.8px;top:203.7px;width:246.4px;height:21.900000000000006px;border:1px solid #c8c8c8;border-radius:3px;background:#fff"><div class="a" style="right:0;top:0;bottom:0;width:20.5px;border-left:1px solid #d6d6d6;background:linear-gradient(#fafafa,#ececec)"></div><div class="a" style="right:5.5px;top:8px;width:0;height:0;border-left:5px solid transparent;border-right:5px solid transparent;border-top:6.5px solid #a6a6a6"></div></div><span class="a" style="left:1313.65px;top:209.00px;font-size:12px;color:#222;white-space:nowrap;transform:scaleX(0.9535);transform-origin:0 0;">Kein Rechenvorteil</span><span class="a" style="left:1203.50px;top:234.25px;font-size:12px;color:#222;white-space:nowrap;transform:scaleX(0.9651);transform-origin:0 0;">Grundrechenart:</span><div class="a" style="left:1310.8px;top:233.2px;width:246.4px;height:21.900000000000006px;border:1px solid #c8c8c8;border-radius:3px;background:#fff"><div class="a" style="right:0;top:0;bottom:0;width:20.5px;border-left:1px solid #d6d6d6;background:linear-gradient(#fafafa,#ececec)"></div><div class="a" style="right:5.5px;top:8px;width:0;height:0;border-left:5px solid transparent;border-right:5px solid transparent;border-top:6.5px solid #a6a6a6"></div></div><span class="a" style="left:1313.62px;top:238.25px;font-size:12px;color:#222;white-space:nowrap;transform:scaleX(0.9850);transform-origin:0 0;">Division</span><span class="a" style="left:1203.50px;top:263.60px;font-size:12px;color:#222;white-space:nowrap;transform:scaleX(0.9771);transform-origin:0 0;">Aufgabentyp:</span><div class="a" style="left:1310.8px;top:262.7px;width:246.4px;height:22.0px;border:1px solid #c8c8c8;border-radius:3px;background:#fff"><div class="a" style="right:0;top:0;bottom:0;width:20.5px;border-left:1px solid #d6d6d6;background:linear-gradient(#fafafa,#ececec)"></div><div class="a" style="right:5.5px;top:8px;width:0;height:0;border-left:5px solid transparent;border-right:5px solid transparent;border-top:6.5px solid #a6a6a6"></div></div><span class="a" style="left:1314.60px;top:267.40px;font-size:12px;color:#222;white-space:nowrap;transform:scaleX(1.0039);transform-origin:0 0;">Zufällig</span><span class="a" style="left:1202.57px;top:303.90px;font-size:12px;font-weight:700;color:#111;white-space:nowrap;transform:scaleX(1.0310);transform-origin:0 0;">Eigenschaften für</span><span class="a" style="left:1202.53px;top:317.00px;font-size:12px;font-weight:700;color:#111;white-space:nowrap;transform:scaleX(1.0722);transform-origin:0 0;">Punkt-</span><span class="a" style="left:1202.54px;top:330.80px;font-size:12px;font-weight:700;color:#111;white-space:nowrap;transform:scaleX(1.0627);transform-origin:0 0;">Rechenarten:</span><span class="a" style="left:1203.60px;top:351.10px;font-size:12px;color:#222;white-space:nowrap;transform:scaleX(0.9660);transform-origin:0 0;">Aufgabenspektrum:</span><div class="a" style="left:1310.8px;top:350.5px;width:246.4px;height:21.899999999999977px;border:1px solid #c8c8c8;border-radius:3px;background:#fff"><div class="a" style="right:0;top:0;bottom:0;width:20.5px;border-left:1px solid #d6d6d6;background:linear-gradient(#fafafa,#ececec)"></div><div class="a" style="right:5.5px;top:8px;width:0;height:0;border-left:5px solid transparent;border-right:5px solid transparent;border-top:6.5px solid #a6a6a6"></div></div><span class="a" style="left:1314.60px;top:355.50px;font-size:12px;color:#222;white-space:nowrap;transform:scaleX(0.9441);transform-origin:0 0;">Anhand Einmaleins-Reihen</span><span class="a" style="left:1202.63px;top:380.80px;font-size:12px;color:#222;white-space:nowrap;transform:scaleX(0.9656);transform-origin:0 0;">Einmaleins-</span><span class="a" style="left:1202.61px;top:394.10px;font-size:12px;color:#222;white-space:nowrap;transform:scaleX(0.9897);transform-origin:0 0;">Reihen:</span><div class="a" style="left:1310.8px;top:380px;width:246.4px;height:22px;border:1px solid #c8c8c8;border-radius:3px;background:#fff"><div class="a" style="right:0;top:0;bottom:0;width:20.5px;border-left:1px solid #d6d6d6;background:linear-gradient(#fafafa,#ececec)"></div><div class="a" style="right:5.5px;top:8px;width:0;height:0;border-left:5px solid transparent;border-right:5px solid transparent;border-top:6.5px solid #a6a6a6"></div></div><span class="a" style="left:1313.63px;top:384.70px;font-size:12px;color:#222;white-space:nowrap;transform:scaleX(0.9686);transform-origin:0 0;">3er-Reihe</span><span class="a" style="left:1202.63px;top:414.90px;font-size:12px;color:#222;white-space:nowrap;transform:scaleX(0.9736);transform-origin:0 0;">Division mit Rest:</span><div class="a" style="left:1310.3px;top:414.3px;width:14.1px;height:14.1px;border:1.3px solid #6a6a6a;border-radius:3px;background:#fff"></div><svg class="a" style="left:1310.3px;top:414.3px" width="14.1" height="14.1"><path d="M3.2 7.2 L6 10 L11 4.3" fill="none" stroke="#333" stroke-width="2.2"/></svg><div class="rhdr" style="left:1185.5px;top:458.2px;width:390.3px;height:31px"><b style="position:absolute;left:11px;top:12px;width:0;height:0;border-left:5px solid transparent;border-right:5px solid transparent;border-bottom:5px solid #dfe7f0"></b></div><span class="a" style="left:1338.80px;top:466.10px;font-size:13.3px;color:#fff;white-space:nowrap;transform:scaleX(1.0049);transform-origin:0 0;">Materialsuche</span><div class="a" style="left:1185.5px;top:489.2px;width:390.3px;height:417.5px;background:linear-gradient(#eef4fb 40%,#e6e6e6);border:1px solid #c4c8cc;border-top:none;border-radius:0 0 4px 4px"></div><svg class="a" style="left:1194px;top:500px" width="20" height="22"><circle cx="12" cy="7.5" r="5" fill="#e8f2fb" stroke="#8a8f96" stroke-width="1.6"/><path d="M8.3 11 L2.5 18" stroke="#b07a3a" stroke-width="2.6" stroke-linecap="round"/></svg><div class="a" style="left:1216.4px;top:500.4px;width:191.8px;height:21.9px;border:1px solid #c8c8c8;border-radius:3px;background:#fff"><div class="a" style="right:0;top:0;bottom:0;width:20px;border-left:1px solid #d6d6d6;background:linear-gradient(#fafafa,#ececec)"></div><div class="a" style="right:5px;top:7.5px;width:0;height:0;border-left:5px solid transparent;border-right:5px solid transparent;border-top:6.5px solid #a6a6a6"></div></div><span class="a" style="left:1219.70px;top:504.90px;font-size:12px;font-style:italic;color:#8c8c8c;white-space:nowrap;transform:scaleX(0.9497);transform-origin:0 0;">Kategorie: "Musikstücke: Die ...</span><div class="a" style="left:1413.8px;top:499px;width:28.700000000000045px;height:24.200000000000045px;border:1px solid #c4c4c4;border-radius:3px;background:linear-gradient(#fbfbfb,#ececec)"></div><svg class="a" style="left:1420px;top:503px" width="16" height="16"><path d="M3 3 L13 13 M13 3 L3 13" stroke="#7a7a7a" stroke-width="3"/></svg><div class="a" style="left:1458px;top:499px;width:32.299999999999955px;height:24.200000000000045px;border:1px solid #c4c4c4;border-radius:3px;background:linear-gradient(#fbfbfb,#ececec)"></div><svg class="a" style="left:1464px;top:502px" width="22" height="20"><path d="M2 5 L8 5 L10 7 L18 7 L17 16 L3 16 Z" fill="#f2c860" stroke="#b8862c" stroke-width=".9"/><path d="M12 10 h3 v3 h3 v3 h-3 v3 h-3 v-3 h-3 v-3 h3 z" fill="#3cb43c" stroke="#1f7a1f" stroke-width=".6"/></svg><div class="a" style="left:1495.3px;top:499px;width:32.90000000000009px;height:24.200000000000045px;border:1px solid #c4c4c4;border-radius:3px;background:linear-gradient(#fbfbfb,#ececec)"></div><svg class="a" style="left:1502px;top:502px" width="20" height="20"><circle cx="10" cy="8" r="6.5" fill="#3a9ad8"/><path d="M5 5 C7 3 9 6 8 8 C6 10 8 12 6 13 M11 3 C13 5 15 6 14 9 C12 11 14 13 13 14" stroke="#3fae3f" stroke-width="2.4" fill="none"/><path d="M10 14.5 V17 M6 18 H14" stroke="#333" stroke-width="1.3"/></svg><div class="a" style="left:1533px;top:499px;width:33.200000000000045px;height:24.200000000000045px;border:1px solid #c4c4c4;border-radius:3px;background:linear-gradient(#d8d8d8,#e2e2e2)"></div><svg class="a" style="left:1540px;top:502px" width="20" height="20"><path d="M3 4 L12 3 L16 7 L16 17 L3 17 Z" fill="#f1d36e" stroke="#b88c2c" stroke-width=".9"/><circle cx="12" cy="12" r="3.2" fill="#fff" stroke="#666" stroke-width="1.2"/><path d="M14.3 14.3 L17 17" stroke="#666" stroke-width="1.6"/></svg><div class="a" style="left:1195px;top:530.8px;width:60.5px;height:45px;border:1px solid #c6c6c6;border-radius:3px 3px 0 0;background:linear-gradient(#d6d6d6,#e0e0e0)"></div><div class="a" style="left:1255.5px;top:530.8px;width:60.5px;height:45px;border:1px solid #c6c6c6;border-radius:3px 3px 0 0;background:linear-gradient(#fafafa,#ededed)"></div><div class="a" style="left:1316px;top:530.8px;width:60.40000000000009px;height:45px;border:1px solid #c6c6c6;border-radius:3px 3px 0 0;background:linear-gradient(#fafafa,#ededed)"></div><div class="a" style="left:1376.4px;top:530.8px;width:61.0px;height:45px;border:1px solid #c6c6c6;border-radius:3px 3px 0 0;background:linear-gradient(#fafafa,#ededed)"></div><svg class="a" style="left:1195px;top:530px" width="245" height="48"><defs><linearGradient id="lsky" x1="0" y1="0" x2="0" y2="1"><stop offset="0" stop-color="#5fa8e0"/><stop offset=".3" stop-color="#d8ecf8"/><stop offset=".42" stop-color="#7cc050"/><stop offset="1" stop-color="#2f8a2a"/></linearGradient><linearGradient id="nt" x1="0" y1="0" x2="1" y2="1"><stop offset="0" stop-color="#6ab8f0"/><stop offset="1" stop-color="#1a5aa8"/></linearGradient></defs><rect x="13.75" y="8.75" width="33" height="29" fill="#fff" stroke="#8a8a8a" stroke-width="1.2"/><rect x="15.75" y="10.75" width="29" height="25" fill="url(#lsky)"/><path d="M15.75 26 C 25 22 33 28 44.75 23 L44.75 35.75 L15.75 35.75 Z" fill="#58b038"/><circle cx="48.90000000000009" cy="33.75" r="8.6" fill="#3f9a6e" stroke="#eaf3ee" stroke-width="1.2"/><text x="48.90000000000009" y="38.35" font-size="13" text-anchor="middle" fill="#fff" font-family="Liberation Sans" stroke="#fff" stroke-width=".3">5</text><path d="M75 26 L89 15 L107 21 L95 32 Z" fill="#dfe6ee" stroke="#7a8aa0" stroke-width=".8"/><path d="M89 15 L91 27 M79 23 L91 18 M94 19 L103 23 M81 26 L92 21 M94 23 L101 26" stroke="#8a96a8" stroke-width=".9"/><path d="M74.70000000000005 26 L95 32.200000000000045 L107.5 21 L107.5 24 L95 35 L74.70000000000005 28.5 Z" fill="#3a6aa8"/><circle cx="109" cy="33.75" r="8.6" fill="#3f9a6e" stroke="#eaf3ee" stroke-width="1.2"/><text x="109" y="38.35" font-size="13" text-anchor="middle" fill="#fff" font-family="Liberation Sans" stroke="#fff" stroke-width=".3">1</text><path d="M145 34 V15 L161.5 7 V27" fill="none" stroke="url(#nt)" stroke-width="2.6"/><path d="M145 15 L161.5 7 L161.5 11 L145 19 Z" fill="#2a6ab8"/><ellipse cx="140.5" cy="35" rx="5" ry="3.8" fill="url(#nt)" transform="rotate(-20 140.5 35)"/><ellipse cx="157" cy="28" rx="5" ry="3.8" fill="url(#nt)" transform="rotate(-20 157 28)"/><circle cx="169.70000000000005" cy="33.75" r="8.6" fill="#3f9a6e" stroke="#eaf3ee" stroke-width="1.2"/><text x="169.70000000000005" y="38.35" font-size="13" text-anchor="middle" fill="#fff" font-family="Liberation Sans" stroke="#fff" stroke-width=".3">5</text><path d="M201 7 H218 L224.70000000000005 13.5 V39.200000000000045 H201 Z" fill="#fff" stroke="#dde2ea" stroke-width=".9"/><path d="M205 22 C205 15 219 15 219 22 C219 28 214 31 212 31 C210 31 205 28 205 22 Z" fill="#f0883a"/><circle cx="208.79999999999995" cy="24" r="2.8" fill="#fff"/><circle cx="215.5999999999999" cy="24" r="2.8" fill="#fff"/><circle cx="209.20000000000005" cy="24.5" r="1.4" fill="#2a4a8a"/><circle cx="215.20000000000005" cy="24.5" r="1.4" fill="#2a4a8a"/><circle cx="230.5999999999999" cy="33.75" r="8.6" fill="#3f9a6e" stroke="#eaf3ee" stroke-width="1.2"/><text x="230.5999999999999" y="38.35" font-size="13" text-anchor="middle" fill="#fff" font-family="Liberation Sans" stroke="#fff" stroke-width=".3">1</text></svg><div class="a" style="left:1195px;top:582.8px;width:105.40000000000009px;height:23.90000000000009px;border:1px solid #c4c4c4;border-radius:3px;background:linear-gradient(#d8d8d8,#e2e2e2)"></div><div class="a" style="left:1308.3px;top:582.8px;width:104.10000000000014px;height:23.90000000000009px;border:1px solid #c4c4c4;border-radius:3px;background:linear-gradient(#fbfbfb,#ececec)"></div><div class="a" style="left:1420px;top:582.8px;width:105.40000000000009px;height:23.90000000000009px;border:1px solid #c4c4c4;border-radius:3px;background:linear-gradient(#fbfbfb,#ececec)"></div><div class="a" style="left:1533px;top:582.8px;width:33.200000000000045px;height:23.90000000000009px;border:1px solid #c4c4c4;border-radius:3px;background:linear-gradient(#fbfbfb,#ececec)"></div><div class="a" style="left:1222px;top:587px;width:15px;height:15px;border-radius:50%;background:conic-gradient(#f00,#ff0,#0f0,#0ff,#00f,#f0f,#f00)"></div><div class="a" style="left:1225px;top:590px;width:9px;height:9px;border-radius:50%;background:radial-gradient(#fff,rgba(255,255,255,0))"></div><span class="a" style="left:1241.20px;top:588.40px;font-size:12px;color:#222;white-space:nowrap;transform:scaleX(1.0031);transform-origin:0 0;">Farbig</span><div class="a" style="left:1340px;top:587px;width:15px;height:15px;border-radius:50%;background:radial-gradient(circle at 35% 35%,#fff,#888 50%,#222)"></div><span class="a" style="left:1359.35px;top:588.40px;font-size:12px;color:#222;white-space:nowrap;transform:scaleX(0.9500);transform-origin:0 0;">S/W</span><div class="a" style="left:1445.5px;top:587px;width:15px;height:15px;border-radius:50%;border:1.6px solid #222;background:#fff"></div><span class="a" style="left:1465.46px;top:588.40px;font-size:12px;color:#222;white-space:nowrap;transform:scaleX(0.9361);transform-origin:0 0;">Umriss</span><svg class="a" style="left:1540px;top:586px" width="20" height="18"><rect x="1" y="1" width="11" height="10" fill="#5aa0e0" stroke="#2a6ab0" stroke-width=".8"/><rect x="5" y="5" width="11" height="10" fill="#3a80d0" stroke="#1e5aa0" stroke-width=".8"/><rect x="9" y="9" width="9" height="8" fill="#2a6ac0" stroke="#1a4a90" stroke-width=".8"/></svg><div class="a" style="left:1195px;top:613.7px;width:371.2px;height:284.6px;background:#fff;border:1px solid #bdbdbd;border-top:2px solid #c4c4c4;border-left:2px solid #c8c8c8;border-radius:2px"></div><svg class="a" style="left:1195px;top:613px" width="370" height="180"><defs><linearGradient id="por" x1="0" y1="0" x2="0" y2="1"><stop offset="0" stop-color="#a89aa0"/><stop offset="1" stop-color="#6a5a60"/></linearGradient></defs><path d="M22 9 L73 8 L74 62 L20 63 Z" fill="#b9adb1"/><ellipse cx="46.5" cy="29" rx="9" ry="11" fill="#d2c8ca"/><path d="M36.5 27 C35 13 58 13 56.5 27 C55 20 52 19 46.5 19 C41 19 38 20 36.5 27 Z" fill="#5a4e54"/><circle cx="42.5" cy="28" r="2.6" fill="none" stroke="#3a3036" stroke-width=".9"/><circle cx="50.5" cy="28" r="2.6" fill="none" stroke="#3a3036" stroke-width=".9"/><path d="M36 33 C36 46 42 50 46.5 50 C51 50 57 46 57 33 C53 38 40 38 36 33 Z" fill="#5e5258"/><path d="M14 69 C16 54 28 48 46.5 48 C65 48 74 54 76 69 Z" fill="#4a3e44"/><path d="M43 48 L46.5 64 L50 48 Z" fill="#e8e4e6"/><path d="M45.5 52 L46.5 62 L47.5 52 Z" fill="#6a5e64"/><path d="M107 64 C102 52 103 32 112 22 C120 12 140 9 152 18 C162 26 163 46 166 62 L168 65 Z" fill="#8fb07e"/><clipPath id="qc"><path d="M107 64 C102 52 103 32 112 22 C120 12 140 9 152 18 C162 26 163 46 166 62 L168 65 Z"/></clipPath><path clip-path="url(#qc)" d="M126 5 C146 4 160 16 162 36 C163 48 164 56 168 64 L146 62 C142 48 138 30 126 5 Z" fill="#2f6668"/><path d="M112 26 C118 20 126 18 132 24 C128 32 118 34 112 26 Z" fill="#c8c47a"/><path d="M104 42 C110 36 118 38 122 44 C116 50 108 50 104 42 Z" fill="#5b9e9c"/><path d="M118 46 C124 42 132 44 134 52 C126 56 120 54 118 46 Z" fill="#b8bc72"/><path d="M140 48 C146 46 152 50 150 58 C144 60 140 56 140 48 Z" fill="#6aa08a"/><path d="M121 33 C124 28 128 28 130 33 L126 36 Z" fill="#234a50"/><path d="M125 35 L131 35 L136 62 L128 62 Z" fill="#e4f2f0"/><path d="M104 63 C116 58 150 58 170 64 C160 67 116 67 104 63 Z" fill="#d4eae6"/><path d="M202 22 C202 15 206 12 212 11 L240 10 C246 10 248 14 248 20 L248 62 C248 70 244 71 236 71 L212 71 C204 71 202 68 202 62 Z" fill="#86a874"/><path d="M208 10 C220 6 244 7 248 12 C246 20 240 24 234 24 L212 26 C206 24 206 16 208 10 Z" fill="#d6e6da"/><path d="M224 16 C226 9 236 8 238 16 L238 28 L224 28 Z" fill="#bcb468"/><rect x="230.5" y="22" width="2" height="11" fill="#8a3a24"/><path d="M202 27 C210 22 218 26 222 30 L202 36 Z" fill="#c8cc86"/><path d="M202 32 C206 30 214 34 216 40 L202 46 Z" fill="#3e6e58"/><path d="M234 34 C242 30 248 32 248 38 L248 52 C240 52 234 46 234 34 Z" fill="#3e6e52"/><path d="M210 31 C218 34 222 40 226 46 C230 52 240 54 248 58 L248 62 C238 60 226 56 222 50 C218 44 214 38 208 34 Z" fill="#d0e8e6"/><path d="M202 54 C214 50 226 56 232 71 L212 71 C204 71 202 68 202 62 Z" fill="#3a5e48"/><path d="M27 119 C27 104 36 96 47 96 C58 96 68 104 68 119 L62 119 C62 108 56 102 47 102 C38 102 32 108 32 119 Z" fill="#d6e8e0"/><path d="M25 152 L30 124 L35 152 Z" fill="#a9c5bd"/><path d="M23 150 L30 132 L37 150 Z" fill="#b8d0c8"/><path d="M59 152 L64 122 L70 152 Z" fill="#a9c5bd"/><path d="M58 150 L64 130 L71 150 Z" fill="#b8d0c8"/><path d="M24 150 C28 144 36 144 40 148 C46 144 52 144 58 148 C62 144 68 146 70 152 C68 160 62 162 58 162 L34 162 C28 162 24 158 24 150 Z" fill="#c9c27a"/><path d="M37 157 C42 152 54 152 60 157 C56 162 42 162 37 157 Z" fill="#3b6f70"/><path d="M40 114 L54 114 L53 129 L40 129 Z" fill="#7a8a5a"/><circle cx="44" cy="111" r="3.3" fill="#4a3e30"/><circle cx="48.5" cy="113" r="2.2" fill="#c04a34"/><path d="M53 108 C55 106 57 107 56 110 L53 112 Z" fill="#f0b060"/><rect x="42" y="129" width="3.5" height="11" fill="#2a3848"/><rect x="47" y="129" width="3.5" height="11" fill="#2a3848"/><path d="M37 133 L63 121 L64 123 L38 135 Z" fill="#9a3a22"/><path d="M40 141 C44 138 52 136 56 134 L59 136 L57 140 L55 142 L55 150 L52 150 L51 145 L44 146 L43 151 L40 151 Z" fill="#c05a30"/><path d="M108 103 C108 99 110 98 114 98 L162 98 C166 98 168 100 168 104 L168 153 C168 157 166 158 162 158 L114 158 C110 158 108 157 108 153 Z" fill="#33604c"/><path d="M120 100 C132 99 150 99 160 102 C156 108 148 112 144 118 C140 126 150 132 156 140 C160 146 166 148 168 150 L168 156 C150 156 130 156 116 154 C112 146 110 136 114 126 C118 116 124 108 120 100 Z" fill="#9fb880"/><path d="M126 104 C134 102 146 102 152 104 C146 110 140 116 138 122 C134 130 140 138 150 146 L124 150 C118 142 116 132 120 124 C124 116 130 110 126 104 Z" fill="#c0cc94"/><path d="M133 109 C128 112 124 116 128 120 C134 124 140 126 134 132 C126 138 116 140 118 146 C122 152 136 154 150 156 L156 158 L146 158 C132 156 118 154 115 147 C112 139 124 134 131 130 C136 126 128 123 124 120 C120 116 126 110 132 107 Z" fill="#cfe4e2"/><circle cx="119" cy="122" r="1.8" fill="#d8c060"/><circle cx="152" cy="117" r="1.8" fill="#d8c060"/><circle cx="139" cy="138" r="1.6" fill="#d8c060"/><circle cx="147" cy="125" r="1.8" fill="#4a7a5a"/><circle cx="131" cy="136" r="2" fill="#3a6a4a"/></svg><span class="a" style="left:1203.85px;top:688.60px;font-size:12px;color:#222;white-space:nowrap;transform:scaleX(1.0471);transform-origin:0 0;">Bedřich Sm...</span><span class="a" style="left:1315.00px;top:688.60px;font-size:12px;color:#222;white-space:nowrap;transform:scaleX(1.0382);transform-origin:0 0;">Quelle</span><span class="a" style="left:1406.89px;top:688.60px;font-size:12px;color:#222;white-space:nowrap;transform:scaleX(1.0115);transform-origin:0 0;">Bach</span><span class="a" style="left:1228.50px;top:778.00px;font-size:12px;color:#222;white-space:nowrap;transform:scaleX(0.9833);transform-origin:0 0;">Jäger</span><span class="a" style="left:1317.92px;top:778.00px;font-size:12px;color:#222;white-space:nowrap;transform:scaleX(0.9821);transform-origin:0 0;">Fluss</span>
<div class="a" style="left:178px;top:89px;width:16.5px;height:824px;background:linear-gradient(90deg,#e9e9e9,#f9f9f9 50%,#ececec)"></div><div class="a" style="left:178px;top:89px;width:16.5px;height:19px;background:#f4f4f4"></div><div class="a" style="left:181.25px;top:95px;width:0;height:0;border-left:5px solid transparent;border-right:5px solid transparent;border-bottom:7px solid #a8a8a8"></div><div class="a" style="left:178px;top:891px;width:16.5px;height:22px;background:#f4f4f4"></div><div class="a" style="left:181.25px;top:899px;width:0;height:0;border-left:5px solid transparent;border-right:5px solid transparent;border-top:7px solid #a8a8a8"></div><div class="a" style="left:180px;top:110.5px;width:12.5px;height:507.5px;background:#e3e3e3;border:1px solid #a9a9a9;border-radius:5px"></div><div class="a" style="left:181.25px;top:361.0px;width:10px;height:1px;background:#9a9a9a"></div><div class="a" style="left:181.25px;top:363.6px;width:10px;height:1px;background:#9a9a9a"></div><div class="a" style="left:181.25px;top:366.2px;width:10px;height:1px;background:#9a9a9a"></div><div class="a" style="left:194.5px;top:89px;width:4.5px;height:825px;background:#f1f1f1;border-left:1px solid #d9d9d9"></div><div class="a" style="left:199px;top:89px;width:1px;height:825px;background:#a9a9a9"></div><div class="a" style="left:1154.3px;top:89px;width:16px;height:824px;background:linear-gradient(90deg,#e9e9e9,#f9f9f9 50%,#ececec)"></div><div class="a" style="left:1154.3px;top:89px;width:16px;height:19px;background:#f4f4f4"></div><div class="a" style="left:1157.3px;top:95px;width:0;height:0;border-left:5px solid transparent;border-right:5px solid transparent;border-bottom:7px solid #a8a8a8"></div><div class="a" style="left:1154.3px;top:891px;width:16px;height:22px;background:#f4f4f4"></div><div class="a" style="left:1157.3px;top:899px;width:0;height:0;border-left:5px solid transparent;border-right:5px solid transparent;border-top:7px solid #a8a8a8"></div><div class="a" style="left:1156.3px;top:112.5px;width:12px;height:475.5px;background:#e3e3e3;border:1px solid #a9a9a9;border-radius:5px"></div><div class="a" style="left:1157.3px;top:347.0px;width:10px;height:1px;background:#9a9a9a"></div><div class="a" style="left:1157.3px;top:349.6px;width:10px;height:1px;background:#9a9a9a"></div><div class="a" style="left:1157.3px;top:352.2px;width:10px;height:1px;background:#9a9a9a"></div><div class="a" style="left:1170.3px;top:89px;width:1px;height:825px;background:#c9c9c9"></div><div class="a" style="left:1585.7px;top:89px;width:14.3px;height:824px;background:linear-gradient(90deg,#e9e9e9,#f9f9f9 50%,#ececec)"></div><div class="a" style="left:1585.7px;top:89px;width:14.3px;height:19px;background:#f4f4f4"></div><div class="a" style="left:1587.8500000000001px;top:95px;width:0;height:0;border-left:5px solid transparent;border-right:5px solid transparent;border-bottom:7px solid #a8a8a8"></div><div class="a" style="left:1585.7px;top:891px;width:14.3px;height:22px;background:#f4f4f4"></div><div class="a" style="left:1587.8500000000001px;top:899px;width:0;height:0;border-left:5px solid transparent;border-right:5px solid transparent;border-top:7px solid #a8a8a8"></div><div class="a" style="left:1587.7px;top:112px;width:10.3px;height:772px;background:#e3e3e3;border:1px solid #a9a9a9;border-radius:5px"></div><div class="a" style="left:1587.8500000000001px;top:493.0px;width:10px;height:1px;background:#9a9a9a"></div><div class="a" style="left:1587.8500000000001px;top:495.6px;width:10px;height:1px;background:#9a9a9a"></div><div class="a" style="left:1587.8500000000001px;top:498.2px;width:10px;height:1px;background:#9a9a9a"></div><div class="a" style="left:1584.7px;top:89px;width:1px;height:825px;background:#dcdcdc"></div>
<div id="status" class="a"></div>
<span class="a" style="left:4.60px;top:922.00px;font-size:12.3px;color:#4a4a58;white-space:nowrap;">Speichert das aktive Dokument</span><div class="a" style="left:1560px;top:921px;width:17px;height:15px;border:1.5px solid #666;border-radius:2px;background:linear-gradient(#bfe0f8 0,#e8f4fb 30%,#5cb040 45%,#2e8a2e 100%)"></div><div class="a" style="left:1582px;top:916px;width:1px;height:26px;background:#d8d8dc"></div><div class="a" style="left:1597px;top:934px;width:2px;height:2px;background:#b8b8bc"></div><div class="a" style="left:1594px;top:937px;width:2px;height:2px;background:#b8b8bc"></div><div class="a" style="left:1597px;top:937px;width:2px;height:2px;background:#b8b8bc"></div><div class="a" style="left:1591px;top:940px;width:2px;height:2px;background:#b8b8bc"></div><div class="a" style="left:1594px;top:940px;width:2px;height:2px;background:#b8b8bc"></div><div class="a" style="left:1597px;top:940px;width:2px;height:2px;background:#b8b8bc"></div>
</body></html>
